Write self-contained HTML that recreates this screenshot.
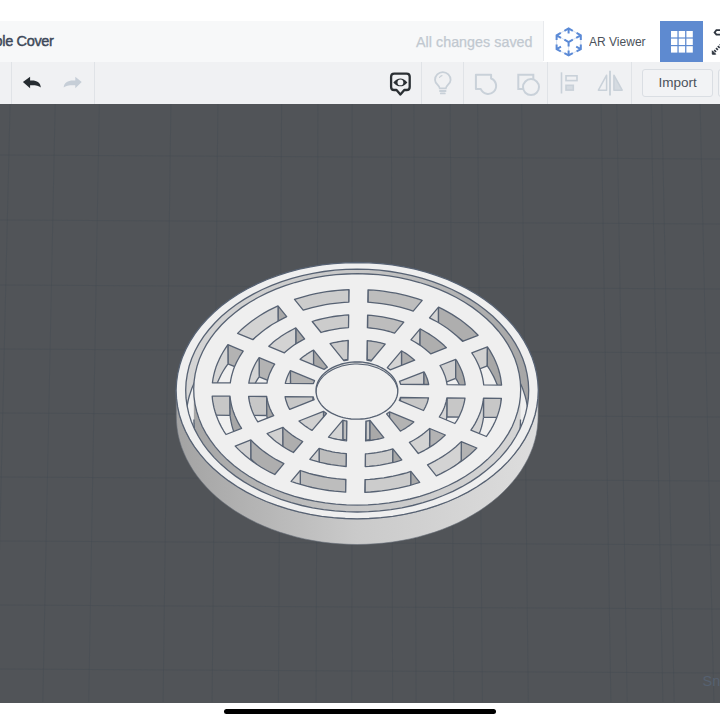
<!DOCTYPE html>
<html><head><meta charset="utf-8"><style>
html,body{margin:0;padding:0;width:720px;height:720px;overflow:hidden;background:#fff;font-family:"Liberation Sans",sans-serif}
div{position:absolute}
#title{left:0;top:21px;width:543px;height:41px;background:#f7f8f9}
#tline{left:0;top:61.5px;width:720px;height:1px;background:#e4e6e9}
#ttl{right:666.5px;top:33px;font-size:14.5px;color:#3d4959;white-space:nowrap;letter-spacing:-0.35px;-webkit-text-stroke:0.45px #3d4959}
#saved{left:416px;top:33.6px;font-size:14.3px;color:#c1c8d0;white-space:nowrap;-webkit-text-stroke:0.25px #c1c8d0;letter-spacing:0.03px}
#ar{left:543px;top:21px;width:177px;height:40px;background:#fff;border-left:1px solid #e8eaed}
#artxt{left:589.3px;top:34.4px;font-size:13.6px;color:#4b525b;white-space:nowrap;transform-origin:0 0;transform:scaleX(0.885)}
#gridbtn{left:660px;top:21px;width:43px;height:41px;background:#5e8ad0}
#tb{left:0;top:62px;width:720px;height:42px;background:#f0f1f3}
.dv{top:62px;width:1px;height:42px;background:#e0e3e7}
#canvas{left:0;top:104px;width:720px;height:598.5px;background:#515458;overflow:hidden}
#bottom{left:0;top:702.5px;width:720px;height:18px;background:#fff}
#home{left:224px;top:708.5px;width:272px;height:5px;border-radius:3px;background:#000}
#import{left:642px;top:69px;width:71px;height:28px;box-sizing:border-box;border:1px solid #dadee3;border-radius:3px;background:#f2f3f5}
#import2{left:718px;top:69px;width:10px;height:28px;box-sizing:border-box;border:1px solid #dadee3;border-radius:3px;background:#f2f3f5}
#imptxt{left:658.5px;top:75px;font-size:13.5px;color:#4b525b;white-space:nowrap}
#snap{left:702.5px;top:673px;font-size:14.5px;color:#566170;white-space:nowrap}
svg{position:absolute}
</style></head><body>
<div id="title"></div>
<div id="ttl">ole Cover</div>
<div id="saved">All changes saved</div>
<div id="ar"></div>
<div id="tline"></div>
<svg style="left:548px;top:22px" width="40" height="40" viewBox="548 22 40 40">
 <g fill="none" stroke="#cbd8ec" stroke-width="0.8">
  <path d="M568.6 28.4 L580.8 35.3 L580.8 49.2 L568.6 55.3 L556.6 49.2 L556.6 35.3 Z M556.6 35.3 L568.6 42 L580.8 35.3 M568.6 42 V55.3"/>
 </g>
 <g fill="none" stroke="#5b8ad6" stroke-width="2" stroke-linecap="butt" stroke-linejoin="miter">
  <path d="M564.4 30.8 L568.6 28.4 L572.8 30.8 M568.6 28.4 V33.6"/>
  <path d="M576.6 32.9 L580.8 35.3 L580.8 40 M580.8 35.3 L576.2 37.8"/>
  <path d="M580.8 44.5 L580.8 49.2 L576.6 51.3 M580.8 49.2 L576.2 46.7"/>
  <path d="M572.8 53.2 L568.6 55.3 L564.4 53.2 M568.6 55.3 V50.5"/>
  <path d="M560.8 51.3 L556.6 49.2 L556.6 44.5 M556.6 49.2 L561 46.7"/>
  <path d="M556.6 40 L556.6 35.3 L560.8 32.9 M556.6 35.3 L561 37.8"/>
  <path d="M564.4 39.6 L568.6 42 L572.8 39.6 M568.6 42 V46.5"/>
 </g>
</svg>
<div id="artxt">AR Viewer</div>
<div id="gridbtn"></div>
<svg style="left:670.5px;top:31px" width="22" height="22" viewBox="0 0 22 22">
 <g fill="#fff">
  <rect x="0" y="0" width="6.4" height="6.4"/><rect x="7.7" y="0" width="6.4" height="6.4"/><rect x="15.4" y="0" width="6.4" height="6.4"/>
  <rect x="0" y="7.6" width="6.4" height="6.4"/><rect x="7.7" y="7.6" width="6.4" height="6.4"/><rect x="15.4" y="7.6" width="6.4" height="6.4"/>
  <rect x="0" y="15.2" width="6.4" height="6.4"/><rect x="7.7" y="15.2" width="6.4" height="6.4"/><rect x="15.4" y="15.2" width="6.4" height="6.4"/>
 </g>
</svg>
<svg style="left:705px;top:25px" width="15" height="32" viewBox="705 25 15 32">
 <path d="M720.5 30.2 H716.4 L714.6 32.4 L716.4 34.6 H720.5" fill="none" stroke="#2f3640" stroke-width="1.8"/>
 <path d="M714.6 51.6 L720.5 45" fill="none" stroke="#2f3640" stroke-width="2.6" stroke-dasharray="1.6 1.1"/>
 <path d="M712.3 50.8 L712.3 54.2 L715.7 54.2 Z" fill="#2f3640" stroke="#2f3640" stroke-width="1"/>
</svg>
<div id="tb"></div>
<div class="dv" style="left:11px"></div>
<div class="dv" style="left:94px"></div>
<div class="dv" style="left:421px"></div>
<div class="dv" style="left:463px"></div>
<div class="dv" style="left:547px"></div>
<div class="dv" style="left:631px"></div>
<svg style="left:0;top:62px" width="720" height="42" viewBox="0 62 720 42">
 <!-- undo -->
 <path d="M22.9 82.1 L30.1 76.8 L30.1 80.4 L32 80.4 C37 80.4 40.8 82.5 40.8 87.6 C39 85.8 36 85.3 32 85.3 L30.1 85.3 L30.1 88.2 Z" fill="#262c31"/>
 <!-- redo -->
 <path d="M81.7 82.1 L75.3 76.8 L75.3 80.4 L73 80.4 C68 80.4 63.7 82.5 63.7 87.6 C65.5 85.8 69 85.3 73 85.3 L75.3 85.3 L75.3 88.2 Z" fill="#c6ced7"/>
 <!-- eye note -->
 <path d="M394.2 73.6 H406.6 Q409.7 73.6 409.7 76.7 V86.9 Q409.7 90 406.6 90 H404.3 L400.4 94.6 L396.5 90 H394.2 Q391.1 90 391.1 86.9 V76.7 Q391.1 73.6 394.2 73.6 Z" fill="none" stroke="#2a2f33" stroke-width="2.3" stroke-linejoin="round"/>
 <path d="M393.3 82.4 Q400.4 74.5 407.4 82.4 Q400.4 90.3 393.3 82.4 Z" fill="#2a2f33"/>
 <circle cx="400.4" cy="82.4" r="2.9" fill="#f2f3f5"/>
 <!-- bulb -->
 <g fill="none" stroke="#c8d0d8" stroke-width="1.8" stroke-linecap="round">
  <path d="M439.8 88.4 C439.8 85.5 435 84 435 80 A7.8 7.8 0 0 1 450.6 80 C450.6 84 445.8 85.5 445.8 88.4 Z"/>
  <path d="M440 91 H445.6 M440.8 93.4 H444.8"/>
  <path d="M439.5 77.5 A4 4 0 0 1 442 75.6" stroke-width="1.1"/>
 </g>
 <!-- union 1 -->
 <path d="M475.9 74.8 H491.1 V78.5 A8 8 0 1 1 480.7 88.9 H475.9 Z" fill="none" stroke="#c9d1d9" stroke-width="2" stroke-linejoin="round"/>
 <!-- union 2 -->
 <g fill="none" stroke="#c9d1d9" stroke-width="2">
  <path d="M523.5 88.9 H518.3 V74.8 H533.3 V79.5"/>
  <circle cx="531" cy="87.1" r="8"/>
 </g>
 <!-- align -->
 <g stroke="#c9d1d9" stroke-width="1.6">
  <path d="M561.5 72.3 V93.5"/>
  <rect x="566" y="75.8" width="11" height="4.8" fill="none"/>
  <rect x="566" y="85.3" width="7.3" height="4.8" fill="#d5dbe1"/>
 </g>
 <!-- mirror -->
 <g stroke="#c9d1d9" stroke-width="1.5" stroke-linejoin="round">
  <path d="M598.4 90.2 L606.6 75.2 V90.2 Z" fill="none"/>
  <path d="M610 70.8 V95.4" stroke-width="1.9"/>
  <path d="M613.9 75.2 L622.2 90.2 H613.9 Z" fill="#d5dbe1"/>
 </g>
</svg>
<div id="import"></div>
<div id="import2"></div>
<div id="imptxt">Import</div>
<div id="canvas"></div>
<svg style="left:0;top:0" width="720" height="720" viewBox="0 0 720 720"><path d="M10.1 104L-4.1 702M55.2 104L42.8 702M99.3 104L88.7 702M170.9 104L163.1 702M217.9 104L212.1 702M281.6 104L278.4 702M317.9 104L316.1 702M352.2 104L351.8 702M391.4 104L392.6 702M413.9 104L416.1 702M450.2 104L453.8 702M477.6 104L482.4 702M521.7 104L528.3 702M601.1 104L610.9 702M616.8 104L627.2 702M651.1 104L662.9 702M661.8 104L674.2 702M700.1 104L713.9 702M0 155L720 159M0 220L720 224M0 285L720 289M0 349L720 353M0 413L720 417M0 477L720 481M0 541L720 545M0 605L720 609M0 669L720 673" stroke="#434a53" stroke-opacity="0.4" stroke-width="1" fill="none"/></svg>
<svg width="720" height="720" viewBox="0 0 720 720" style="position:absolute;left:0;top:0"><defs><linearGradient id="sideg" x1="0" x2="1" y1="0" y2="0"><stop offset="0" stop-color="#a3a3a3"/><stop offset="0.5" stop-color="#cacaca"/><stop offset="1" stop-color="#dddddd"/></linearGradient><clipPath id="clip"><path d="M528.7 390.0 528.3 382.1 527.1 374.2 525.3 366.3 522.7 358.6 519.4 351.0 515.4 343.6 510.7 336.4 505.4 329.5 499.4 322.7 492.9 316.3 485.7 310.2 478.1 304.5 469.9 299.1 461.2 294.1 452.1 289.5 442.6 285.3 432.7 281.6 422.5 278.3 412.1 275.6 401.4 273.3 390.5 271.5 379.5 270.2 368.4 269.4 357.2 269.2 346.0 269.4 334.9 270.2 323.9 271.5 313.0 273.3 302.3 275.6 291.9 278.3 281.7 281.6 271.8 285.3 262.3 289.5 253.2 294.1 244.5 299.1 236.3 304.5 228.7 310.2 221.5 316.3 215.0 322.7 209.0 329.5 203.7 336.4 199.0 343.6 195.0 351.0 191.7 358.6 189.1 366.3 187.3 374.2 186.1 382.1 185.7 390.0 186.0 397.9 187.1 405.9 188.8 413.7 191.3 421.5 194.6 429.1 198.5 436.5 203.1 443.8 208.3 450.8 214.2 457.6 220.7 464.1 227.9 470.3 235.5 476.1 243.7 481.6 252.4 486.7 261.5 491.3 271.1 495.5 281.0 499.3 291.3 502.6 301.8 505.5 312.6 507.8 323.6 509.6 334.7 510.9 345.9 511.7 357.2 512.0 368.5 511.7 379.7 510.9 390.8 509.6 401.8 507.8 412.6 505.5 423.1 502.6 433.4 499.3 443.3 495.5 452.9 491.3 462.0 486.7 470.7 481.6 478.9 476.1 486.5 470.3 493.7 464.1 500.2 457.6 506.1 450.8 511.3 443.8 515.9 436.5 519.8 429.1 523.1 421.5 525.6 413.7 527.3 405.9 528.4 397.9Z"/></clipPath><linearGradient id="lipg" gradientUnits="userSpaceOnUse" x1="185.7" x2="528.7" y1="0" y2="0"><stop offset="0" stop-color="#d5d5d5"/><stop offset="0.5" stop-color="#c7c7c7"/><stop offset="1" stop-color="#a6a6a6"/></linearGradient><linearGradient id="grg" gradientUnits="userSpaceOnUse" x1="193.7" x2="520.7" y1="0" y2="0"><stop offset="0" stop-color="#a6a6a6"/><stop offset="0.5" stop-color="#c7c7c7"/><stop offset="1" stop-color="#d5d5d5"/></linearGradient><clipPath id="h1"><path d="M400.6 384.3 428.7 384.5 428.4 383.2 428.1 381.9 427.8 380.6 427.4 379.3 426.9 378.0 426.4 376.8 425.9 375.5 425.3 374.2 424.7 373.0 424.0 371.8 399.5 381.4 399.7 381.7 399.8 382.0 399.9 382.2 400.0 382.5 400.1 382.8 400.2 383.1 400.3 383.4 400.4 383.7 400.5 384.0Z"/></clipPath><clipPath id="h2"><path d="M390.2 369.8 414.7 360.2 413.5 359.2 412.3 358.2 411.1 357.2 409.8 356.2 408.5 355.2 407.2 354.3 405.8 353.4 404.4 352.5 403.0 351.7 401.5 350.8 387.3 367.7 387.6 367.9 387.9 368.1 388.2 368.3 388.5 368.5 388.8 368.7 389.1 369.0 389.4 369.2 389.7 369.4 390.0 369.6Z"/></clipPath><clipPath id="h3"><path d="M371.0 361.0 385.2 344.1 383.5 343.6 381.7 343.1 380.0 342.7 378.2 342.3 376.4 341.9 374.6 341.6 372.7 341.3 370.9 341.0 369.0 340.8 367.2 340.6 366.9 360.1 367.3 360.2 367.7 360.3 368.1 360.4 368.5 360.4 368.9 360.5 369.3 360.6 369.7 360.7 370.2 360.8 370.6 360.9Z"/></clipPath><clipPath id="h4"><path d="M347.9 360.0 348.3 340.4 346.4 340.6 344.5 340.8 342.7 341.0 340.8 341.3 339.0 341.6 337.2 342.0 335.4 342.3 333.6 342.7 331.8 343.2 330.1 343.7 343.8 360.7 344.2 360.7 344.6 360.6 345.0 360.5 345.4 360.4 345.9 360.3 346.3 360.3 346.7 360.2 347.1 360.1 347.5 360.1Z"/></clipPath><clipPath id="h5"><path d="M327.3 367.2 313.6 350.1 312.1 350.9 310.6 351.8 309.2 352.6 307.8 353.5 306.4 354.4 305.1 355.4 303.8 356.3 302.5 357.3 301.3 358.3 300.1 359.3 324.2 369.3 324.5 369.1 324.8 368.9 325.1 368.7 325.4 368.5 325.7 368.2 326.0 368.0 326.3 367.8 326.7 367.6 327.0 367.4Z"/></clipPath><clipPath id="h6"><path d="M314.6 380.7 290.4 370.7 289.7 371.9 289.0 373.2 288.4 374.4 287.8 375.7 287.3 376.9 286.8 378.2 286.4 379.5 286.0 380.8 285.6 382.1 285.3 383.4 313.4 383.6 313.5 383.3 313.6 383.0 313.7 382.7 313.8 382.4 313.9 382.1 314.1 381.9 314.2 381.6 314.3 381.3 314.4 381.0Z"/></clipPath><clipPath id="h7"><path d="M313.2 396.9 285.1 396.6 285.3 397.9 285.6 399.2 286.0 400.5 286.4 401.8 286.8 403.1 287.3 404.4 287.8 405.7 288.4 406.9 289.0 408.2 289.7 409.4 314.2 399.7 314.1 399.5 314.0 399.2 313.9 398.9 313.8 398.6 313.6 398.3 313.5 398.0 313.4 397.7 313.3 397.4 313.3 397.1Z"/></clipPath><clipPath id="h8"><path d="M323.5 411.3 299.0 421.0 300.1 422.0 301.3 423.1 302.6 424.1 303.8 425.0 305.1 426.0 306.5 426.9 307.8 427.8 309.2 428.7 310.7 429.6 312.1 430.4 326.5 413.5 326.2 413.3 325.9 413.1 325.6 412.8 325.3 412.6 325.0 412.4 324.7 412.2 324.4 412.0 324.1 411.8 323.8 411.6Z"/></clipPath><clipPath id="h9"><path d="M342.8 420.2 328.5 437.2 330.2 437.7 332.0 438.2 333.7 438.6 335.5 439.0 337.4 439.4 339.2 439.7 341.0 440.0 342.9 440.3 344.7 440.6 346.6 440.8 346.9 421.1 346.5 421.0 346.1 420.9 345.7 420.8 345.3 420.8 344.8 420.7 344.4 420.6 344.0 420.5 343.6 420.4 343.2 420.3Z"/></clipPath><clipPath id="h10"><path d="M365.9 421.2 365.6 440.9 367.5 440.7 369.3 440.5 371.2 440.3 373.0 440.0 374.9 439.7 376.7 439.4 378.5 439.0 380.3 438.6 382.1 438.1 383.8 437.6 370.0 420.5 369.6 420.5 369.2 420.6 368.8 420.7 368.4 420.8 368.0 420.9 367.6 420.9 367.1 421.0 366.7 421.1 366.3 421.1Z"/></clipPath><clipPath id="h11"><path d="M386.6 413.9 400.4 431.1 401.9 430.3 403.3 429.5 404.8 428.6 406.2 427.7 407.5 426.8 408.9 425.9 410.1 424.9 411.4 423.9 412.6 422.9 413.8 421.9 389.6 411.9 389.3 412.1 389.0 412.3 388.7 412.5 388.4 412.7 388.1 412.9 387.8 413.1 387.5 413.3 387.2 413.5 386.9 413.7Z"/></clipPath><clipPath id="h12"><path d="M399.3 400.4 423.5 410.5 424.2 409.2 424.8 408.0 425.5 406.8 426.0 405.5 426.6 404.2 427.1 403.0 427.5 401.7 427.9 400.4 428.2 399.1 428.5 397.8 400.4 397.5 400.3 397.8 400.2 398.1 400.1 398.4 400.0 398.7 399.9 399.0 399.8 399.3 399.7 399.6 399.5 399.9 399.4 400.1Z"/></clipPath><clipPath id="h13"><path d="M447.1 384.6 465.2 384.8 464.8 382.2 464.3 379.5 463.7 376.9 462.9 374.3 462.1 371.7 461.0 369.2 459.9 366.7 458.6 364.2 457.3 361.7 455.7 359.3 440.0 365.5 441.1 367.3 442.1 369.2 443.0 371.0 443.8 372.9 444.6 374.9 445.3 376.8 445.8 378.7 446.3 380.7 446.7 382.7Z"/></clipPath><clipPath id="h14"><path d="M430.7 353.9 446.4 347.7 444.2 345.6 441.9 343.5 439.5 341.4 437.0 339.4 434.4 337.5 431.7 335.7 428.9 333.9 426.1 332.2 423.1 330.5 420.1 328.9 410.9 339.8 413.1 341.0 415.3 342.3 417.5 343.6 419.5 344.9 421.6 346.3 423.5 347.8 425.4 349.2 427.2 350.8 429.0 352.3Z"/></clipPath><clipPath id="h15"><path d="M394.6 333.1 403.8 322.2 400.3 321.1 396.9 320.1 393.3 319.2 389.7 318.3 386.1 317.6 382.5 316.9 378.8 316.3 375.1 315.8 371.3 315.4 367.6 315.1 367.4 327.7 370.2 328.0 373.0 328.3 375.8 328.7 378.5 329.2 381.3 329.7 384.0 330.2 386.7 330.8 389.4 331.5 392.0 332.3Z"/></clipPath><clipPath id="h16"><path d="M348.5 327.6 348.7 315.0 344.9 315.2 341.2 315.6 337.4 316.0 333.7 316.5 330.1 317.1 326.4 317.8 322.8 318.6 319.2 319.5 315.7 320.4 312.2 321.5 321.1 332.5 323.7 331.7 326.4 331.0 329.1 330.4 331.8 329.8 334.5 329.3 337.3 328.8 340.0 328.4 342.8 328.1 345.6 327.8Z"/></clipPath><clipPath id="h17"><path d="M304.6 339.0 295.8 327.9 292.7 329.5 289.7 331.1 286.7 332.8 283.9 334.5 281.1 336.3 278.5 338.2 275.9 340.1 273.4 342.1 271.1 344.2 268.8 346.3 284.4 352.8 286.1 351.2 287.9 349.7 289.8 348.2 291.7 346.7 293.7 345.3 295.8 343.9 297.9 342.6 300.1 341.4 302.3 340.1Z"/></clipPath><clipPath id="h18"><path d="M274.7 364.2 259.1 357.7 257.5 360.1 256.0 362.5 254.7 365.0 253.5 367.5 252.4 370.1 251.4 372.6 250.6 375.2 249.9 377.8 249.3 380.4 248.8 383.1 267.0 383.2 267.3 381.2 267.8 379.3 268.4 377.3 269.0 375.4 269.7 373.5 270.6 371.6 271.5 369.7 272.4 367.8 273.5 366.0Z"/></clipPath><clipPath id="h19"><path d="M266.7 396.5 248.6 396.3 248.9 399.0 249.4 401.6 250.0 404.2 250.7 406.8 251.6 409.4 252.6 412.0 253.7 414.5 254.9 417.0 256.3 419.5 257.8 421.9 273.7 415.7 272.6 413.9 271.6 412.0 270.7 410.1 269.8 408.2 269.1 406.3 268.4 404.3 267.9 402.4 267.4 400.4 267.0 398.5Z"/></clipPath><clipPath id="h20"><path d="M282.9 427.3 267.1 433.5 269.3 435.7 271.6 437.8 274.0 439.9 276.5 441.9 279.1 443.8 281.8 445.7 284.5 447.5 287.4 449.2 290.4 450.9 293.4 452.5 302.7 441.5 300.5 440.3 298.3 439.0 296.1 437.7 294.0 436.4 292.0 435.0 290.1 433.5 288.2 432.0 286.4 430.5 284.6 428.9Z"/></clipPath><clipPath id="h21"><path d="M319.1 448.3 309.8 459.3 313.2 460.4 316.7 461.4 320.3 462.4 323.9 463.2 327.5 464.0 331.2 464.7 334.9 465.2 338.6 465.7 342.4 466.1 346.2 466.5 346.4 453.7 343.5 453.4 340.7 453.1 337.9 452.7 335.2 452.3 332.4 451.8 329.7 451.2 327.0 450.6 324.3 449.9 321.7 449.1Z"/></clipPath><clipPath id="h22"><path d="M365.4 453.8 365.2 466.6 369.0 466.4 372.7 466.0 376.5 465.6 380.2 465.1 383.9 464.4 387.6 463.7 391.2 462.9 394.8 462.1 398.3 461.1 401.8 460.0 392.9 448.9 390.2 449.7 387.6 450.4 384.9 451.0 382.1 451.6 379.4 452.1 376.6 452.6 373.8 453.0 371.0 453.3 368.2 453.6Z"/></clipPath><clipPath id="h23"><path d="M409.4 442.4 418.3 453.5 421.4 451.9 424.5 450.3 427.4 448.6 430.2 446.9 433.0 445.1 435.7 443.2 438.2 441.2 440.7 439.2 443.1 437.1 445.3 435.0 429.7 428.5 427.9 430.1 426.1 431.6 424.3 433.1 422.3 434.6 420.3 436.0 418.3 437.4 416.1 438.7 413.9 440.0 411.7 441.2Z"/></clipPath><clipPath id="h24"><path d="M439.3 417.0 454.9 423.5 456.5 421.1 458.0 418.6 459.3 416.2 460.5 413.6 461.6 411.1 462.5 408.5 463.3 405.9 464.0 403.3 464.6 400.7 465.0 398.1 446.9 397.9 446.5 399.9 446.1 401.9 445.5 403.8 444.9 405.8 444.2 407.7 443.4 409.6 442.5 411.5 441.5 413.4 440.4 415.2Z"/></clipPath><clipPath id="h25"><path d="M483.7 384.9 501.6 385.1 501.1 381.1 500.5 377.2 499.6 373.2 498.5 369.3 497.2 365.4 495.6 361.6 493.9 357.8 491.9 354.1 489.8 350.4 487.4 346.8 471.8 352.9 473.8 356.0 475.6 359.0 477.2 362.2 478.6 365.3 479.9 368.5 481.0 371.8 481.9 375.0 482.7 378.3 483.3 381.6Z"/></clipPath><clipPath id="h26"><path d="M462.5 341.4 478.1 335.3 474.8 332.0 471.5 328.8 467.9 325.7 464.2 322.7 460.3 319.8 456.2 317.1 452.0 314.4 447.6 311.9 443.1 309.4 438.5 307.1 429.5 317.8 433.3 319.8 437.0 321.8 440.7 324.0 444.2 326.2 447.6 328.5 450.8 330.9 453.9 333.4 456.9 336.0 459.8 338.7Z"/></clipPath><clipPath id="h27"><path d="M413.2 311.1 422.2 300.4 417.1 298.7 411.9 297.1 406.6 295.7 401.3 294.4 395.9 293.2 390.4 292.3 384.8 291.4 379.2 290.7 373.6 290.2 368.0 289.8 367.8 302.2 372.5 302.6 377.2 303.1 381.8 303.6 386.5 304.4 391.1 305.2 395.6 306.1 400.1 307.2 404.5 308.4 408.9 309.7Z"/></clipPath><clipPath id="h28"><path d="M348.9 302.1 349.1 289.7 343.4 290.0 337.8 290.4 332.2 291.0 326.6 291.7 321.1 292.7 315.7 293.7 310.2 294.9 304.9 296.3 299.7 297.8 294.5 299.4 303.2 310.2 307.6 308.9 312.0 307.7 316.4 306.6 320.9 305.6 325.5 304.7 330.1 303.9 334.8 303.3 339.5 302.8 344.2 302.4Z"/></clipPath><clipPath id="h29"><path d="M286.7 316.7 278.0 305.9 273.3 308.1 268.7 310.4 264.3 312.9 260.0 315.5 255.9 318.2 251.9 321.0 248.1 324.0 244.4 327.0 240.9 330.1 237.6 333.4 252.9 339.7 255.7 337.1 258.7 334.4 261.7 331.9 264.9 329.5 268.3 327.1 271.7 324.8 275.3 322.7 279.0 320.6 282.8 318.6Z"/></clipPath><clipPath id="h30"><path d="M243.2 351.1 227.9 344.7 225.4 348.3 223.1 352.0 221.0 355.7 219.2 359.4 217.5 363.2 216.0 367.1 214.8 371.0 213.8 374.9 213.0 378.8 212.4 382.8 230.3 382.9 230.8 379.6 231.5 376.3 232.4 373.1 233.4 369.8 234.6 366.6 236.0 363.4 237.6 360.3 239.3 357.2 241.2 354.1Z"/></clipPath><clipPath id="h31"><path d="M230.0 396.2 212.2 396.1 212.5 400.0 213.2 404.0 214.0 407.9 215.1 411.8 216.4 415.7 217.9 419.6 219.6 423.4 221.5 427.1 223.6 430.8 226.0 434.5 241.6 428.3 239.7 425.3 237.9 422.2 236.4 419.0 234.9 415.8 233.7 412.6 232.6 409.4 231.7 406.1 231.0 402.8 230.4 399.5Z"/></clipPath><clipPath id="h32"><path d="M250.9 439.9 235.2 446.1 238.4 449.4 241.8 452.6 245.4 455.7 249.1 458.8 253.0 461.7 257.0 464.5 261.2 467.2 265.6 469.8 270.1 472.2 274.8 474.5 283.9 463.7 280.1 461.7 276.3 459.7 272.7 457.5 269.2 455.2 265.8 452.9 262.5 450.5 259.4 447.9 256.4 445.3 253.6 442.7Z"/></clipPath><clipPath id="h33"><path d="M300.3 470.5 291.1 481.4 296.2 483.1 301.5 484.7 306.8 486.2 312.2 487.5 317.7 488.6 323.2 489.6 328.8 490.5 334.4 491.2 340.1 491.7 345.7 492.1 345.9 479.5 341.2 479.1 336.5 478.7 331.8 478.1 327.1 477.4 322.5 476.5 317.9 475.5 313.4 474.5 309.0 473.3 304.6 471.9Z"/></clipPath><clipPath id="h34"><path d="M365.0 479.6 364.8 492.3 370.5 492.0 376.1 491.5 381.8 490.9 387.4 490.1 393.0 489.2 398.5 488.2 403.9 486.9 409.3 485.6 414.6 484.0 419.7 482.4 410.9 471.4 406.6 472.8 402.1 474.0 397.6 475.1 393.1 476.1 388.5 477.0 383.9 477.8 379.2 478.4 374.5 479.0 369.7 479.4Z"/></clipPath><clipPath id="h35"><path d="M427.5 464.8 436.3 475.8 441.0 473.6 445.6 471.2 450.0 468.7 454.3 466.1 458.5 463.3 462.5 460.5 466.3 457.5 470.0 454.4 473.5 451.3 476.8 448.0 461.3 441.6 458.5 444.3 455.6 446.9 452.5 449.5 449.3 451.9 446.0 454.3 442.5 456.6 438.9 458.8 435.2 460.9 431.4 462.9Z"/></clipPath><clipPath id="h36"><path d="M470.9 430.1 486.4 436.5 488.8 432.9 491.1 429.3 493.1 425.6 495.0 421.8 496.6 418.0 498.0 414.1 499.2 410.2 500.2 406.3 500.9 402.3 501.4 398.4 483.5 398.2 483.1 401.5 482.4 404.8 481.6 408.1 480.6 411.4 479.4 414.6 478.0 417.8 476.5 420.9 474.8 424.1 472.9 427.1Z"/></clipPath><clipPath id="cdisc"><path d="M397.8 390.9 397.8 389.0 397.5 387.1 397.1 385.3 396.5 383.5 395.8 381.7 394.9 379.9 393.8 378.2 392.5 376.5 391.2 374.9 389.6 373.4 387.9 371.9 386.1 370.6 384.2 369.3 382.2 368.1 380.0 367.0 377.7 365.9 375.4 365.0 373.0 364.3 370.5 363.6 367.9 363.0 365.3 362.6 362.7 362.2 360.0 362.0 357.4 362.0 354.7 362.0 352.0 362.2 349.4 362.4 346.8 362.8 344.2 363.4 341.7 364.0 339.2 364.8 336.9 365.6 334.6 366.6 332.4 367.7 330.3 368.8 328.3 370.1 326.5 371.4 324.7 372.9 323.2 374.4 321.7 376.0 320.4 377.6 319.3 379.3 318.3 381.1 317.5 382.8 316.9 384.7 316.4 386.5 316.1 388.4 316.0 390.2 316.0 392.1 316.3 394.0 316.7 395.8 317.2 397.7 318.0 399.5 318.9 401.2 320.0 402.9 321.2 404.6 322.6 406.2 324.1 407.8 325.8 409.2 327.6 410.6 329.5 411.9 331.6 413.1 333.8 414.2 336.0 415.2 338.4 416.1 340.8 416.9 343.3 417.6 345.8 418.2 348.5 418.6 351.1 419.0 353.8 419.2 356.4 419.2 359.1 419.2 361.8 419.0 364.4 418.8 367.1 418.3 369.6 417.8 372.1 417.2 374.6 416.4 377.0 415.6 379.3 414.6 381.5 413.5 383.6 412.3 385.5 411.1 387.4 409.7 389.1 408.3 390.7 406.8 392.1 405.2 393.4 403.5 394.5 401.8 395.5 400.1 396.3 398.3 397.0 396.5 397.4 394.6 397.7 392.8Z"/></clipPath></defs><path d="M176.3 415.7 176.5 422.0 177.1 428.3 178.1 434.5 179.6 440.7 181.5 446.9 183.9 452.9 186.6 458.9 189.8 464.8 193.3 470.6 197.3 476.2 201.7 481.7 206.4 487.1 211.5 492.3 216.9 497.2 222.7 502.0 228.8 506.6 235.3 511.0 242.0 515.1 249.0 519.0 256.3 522.7 263.8 526.1 271.6 529.2 279.5 532.1 287.7 534.6 296.0 536.9 304.4 538.9 313.0 540.6 321.7 542.0 330.5 543.1 339.4 543.8 348.3 544.3 357.2 544.5 366.1 544.3 375.0 543.8 383.9 543.1 392.7 542.0 401.4 540.6 410.0 538.9 418.4 536.9 426.7 534.6 434.9 532.1 442.8 529.2 450.6 526.1 458.1 522.7 465.4 519.0 472.4 515.1 479.1 511.0 485.6 506.6 491.7 502.0 497.5 497.2 502.9 492.3 508.0 487.1 512.7 481.7 517.1 476.2 521.1 470.6 524.6 464.8 527.8 458.9 530.5 452.9 532.9 446.9 534.8 440.7 536.3 434.5 537.3 428.3 537.9 422.0 538.1 415.7 538.3 390.0 538.1 396.3 537.5 402.6 536.4 408.8 535.0 415.0 533.0 421.2 530.7 427.3 528.0 433.2 524.8 439.1 521.2 444.9 517.3 450.5 512.9 456.0 508.2 461.4 503.1 466.6 497.6 471.6 491.8 476.3 485.7 480.9 479.2 485.3 472.5 489.4 465.5 493.3 458.2 497.0 450.7 500.4 442.9 503.5 435.0 506.4 426.8 508.9 418.5 511.2 410.0 513.2 401.4 514.9 392.7 516.3 383.9 517.4 375.0 518.2 366.1 518.6 357.2 518.8 348.3 518.6 339.4 518.2 330.5 517.4 321.7 516.3 313.0 514.9 304.4 513.2 295.9 511.2 287.6 508.9 279.4 506.4 271.5 503.5 263.7 500.4 256.2 497.0 248.9 493.3 241.9 489.4 235.2 485.3 228.7 480.9 222.6 476.3 216.8 471.6 211.3 466.6 206.2 461.4 201.5 456.0 197.1 450.5 193.2 444.9 189.6 439.1 186.4 433.2 183.7 427.3 181.4 421.2 179.4 415.0 178.0 408.8 176.9 402.6 176.3 396.3 176.1 390.0Z" fill="url(#sideg)" stroke="#6a707a" stroke-width="0.6"/><path d="M538.3 390.0 537.8 381.6 536.6 373.3 534.6 365.0 531.9 356.9 528.4 348.9 524.2 341.1 519.2 333.4 513.6 326.1 507.3 319.0 500.4 312.2 492.9 305.8 484.8 299.7 476.1 294.0 467.0 288.7 457.4 283.9 447.3 279.5 436.9 275.6 426.2 272.2 415.1 269.2 403.8 266.8 392.4 264.9 380.7 263.6 369.0 262.8 357.2 262.5 345.4 262.8 333.7 263.6 322.0 264.9 310.6 266.8 299.3 269.2 288.2 272.2 277.5 275.6 267.1 279.5 257.0 283.9 247.4 288.7 238.3 294.0 229.6 299.7 221.5 305.8 214.0 312.2 207.1 319.0 200.8 326.1 195.2 333.4 190.2 341.1 186.0 348.9 182.5 356.9 179.8 365.0 177.8 373.3 176.6 381.6 176.1 390.0 176.5 398.4 177.6 406.7 179.4 415.0 182.1 423.2 185.5 431.3 189.6 439.1 194.5 446.8 200.0 454.2 206.2 461.4 213.1 468.2 220.6 474.8 228.7 480.9 237.4 486.7 246.5 492.1 256.2 497.0 266.3 501.5 276.8 505.4 287.6 508.9 298.7 511.9 310.1 514.4 321.7 516.3 333.4 517.7 345.3 518.5 357.2 518.8 369.1 518.5 381.0 517.7 392.7 516.3 404.3 514.4 415.7 511.9 426.8 508.9 437.6 505.4 448.1 501.5 458.2 497.0 467.9 492.1 477.0 486.7 485.7 480.9 493.8 474.8 501.3 468.2 508.2 461.4 514.4 454.2 519.9 446.8 524.8 439.1 528.9 431.3 532.3 423.2 535.0 415.0 536.8 406.7 537.9 398.4Z" fill="#efefef" stroke="#576273" stroke-width="1.3"/><g clip-path="url(#clip)"><path d="M528.7 390.0 528.3 382.1 527.1 374.2 525.3 366.3 522.7 358.6 519.4 351.0 515.4 343.6 510.7 336.4 505.4 329.5 499.4 322.7 492.9 316.3 485.7 310.2 478.1 304.5 469.9 299.1 461.2 294.1 452.1 289.5 442.6 285.3 432.7 281.6 422.5 278.3 412.1 275.6 401.4 273.3 390.5 271.5 379.5 270.2 368.4 269.4 357.2 269.2 346.0 269.4 334.9 270.2 323.9 271.5 313.0 273.3 302.3 275.6 291.9 278.3 281.7 281.6 271.8 285.3 262.3 289.5 253.2 294.1 244.5 299.1 236.3 304.5 228.7 310.2 221.5 316.3 215.0 322.7 209.0 329.5 203.7 336.4 199.0 343.6 195.0 351.0 191.7 358.6 189.1 366.3 187.3 374.2 186.1 382.1 185.7 390.0 186.0 397.9 187.1 405.9 188.8 413.7 191.3 421.5 194.6 429.1 198.5 436.5 203.1 443.8 208.3 450.8 214.2 457.6 220.7 464.1 227.9 470.3 235.5 476.1 243.7 481.6 252.4 486.7 261.5 491.3 271.1 495.5 281.0 499.3 291.3 502.6 301.8 505.5 312.6 507.8 323.6 509.6 334.7 510.9 345.9 511.7 357.2 512.0 368.5 511.7 379.7 510.9 390.8 509.6 401.8 507.8 412.6 505.5 423.1 502.6 433.4 499.3 443.3 495.5 452.9 491.3 462.0 486.7 470.7 481.6 478.9 476.1 486.5 470.3 493.7 464.1 500.2 457.6 506.1 450.8 511.3 443.8 515.9 436.5 519.8 429.1 523.1 421.5 525.6 413.7 527.3 405.9 528.4 397.9Z" fill="#f0f0f0"/><path d="M528.7 390.0 528.6 386.0 528.3 382.1 527.8 378.1 527.1 374.2 526.3 370.2 525.3 366.3 524.0 362.5 522.7 358.6 521.1 354.8 519.4 351.0 517.4 347.3 515.4 343.6 513.1 340.0 510.7 336.4 508.1 332.9 505.4 329.5 502.5 326.1 499.4 322.7 496.2 319.5 492.9 316.3 489.4 313.2 485.7 310.2 482.0 307.3 478.1 304.5 474.0 301.7 469.9 299.1 465.6 296.5 461.2 294.1 456.7 291.7 452.1 289.5 447.4 287.3 442.6 285.3 437.7 283.4 432.7 281.6 427.7 279.9 422.5 278.3 417.3 276.9 412.1 275.6 406.8 274.4 401.4 273.3 396.0 272.3 390.5 271.5 385.0 270.8 379.5 270.2 373.9 269.8 368.4 269.4 362.8 269.3 357.2 269.2 351.6 269.3 346.0 269.4 340.5 269.8 334.9 270.2 329.4 270.8 323.9 271.5 318.4 272.3 313.0 273.3 307.6 274.4 302.3 275.6 297.1 276.9 291.9 278.3 286.7 279.9 281.7 281.6 276.7 283.4 271.8 285.3 267.0 287.3 262.3 289.5 257.7 291.7 253.2 294.1 248.8 296.5 244.5 299.1 240.4 301.7 236.3 304.5 232.4 307.3 228.7 310.2 225.0 313.2 221.5 316.3 218.2 319.5 215.0 322.7 211.9 326.1 209.0 329.5 206.3 332.9 203.7 336.4 201.3 340.0 199.0 343.6 197.0 347.3 195.0 351.0 193.3 354.8 191.7 358.6 190.4 362.5 189.1 366.3 188.1 370.2 187.3 374.2 186.6 378.1 186.1 382.1 185.8 386.0 185.7 390.0 185.9 419.6 186.0 415.7 186.3 411.7 186.8 407.7 187.5 403.8 188.3 399.9 189.3 396.0 190.6 392.1 191.9 388.3 193.5 384.5 195.2 380.7 197.1 377.0 199.2 373.3 201.5 369.6 203.9 366.1 206.5 362.5 209.2 359.1 212.1 355.7 215.1 352.4 218.3 349.1 221.7 346.0 225.2 342.9 228.8 339.9 232.6 336.9 236.5 334.1 240.5 331.4 244.7 328.7 248.9 326.2 253.3 323.7 257.8 321.4 262.4 319.1 267.1 317.0 271.9 314.9 276.8 313.0 281.8 311.2 286.8 309.6 291.9 308.0 297.1 306.5 302.4 305.2 307.7 304.0 313.1 302.9 318.5 302.0 323.9 301.1 329.4 300.4 334.9 299.9 340.5 299.4 346.0 299.1 351.6 298.9 357.2 298.8 362.8 298.9 368.4 299.1 373.9 299.4 379.5 299.9 385.0 300.4 390.5 301.1 395.9 302.0 401.3 302.9 406.7 304.0 412.0 305.2 417.3 306.5 422.5 308.0 427.6 309.6 432.6 311.2 437.6 313.0 442.5 314.9 447.3 317.0 452.0 319.1 456.6 321.4 461.1 323.7 465.5 326.2 469.7 328.7 473.9 331.4 477.9 334.1 481.8 336.9 485.6 339.9 489.2 342.9 492.7 346.0 496.1 349.1 499.3 352.4 502.3 355.7 505.2 359.1 507.9 362.5 510.5 366.1 512.9 369.6 515.2 373.3 517.3 377.0 519.2 380.7 520.9 384.5 522.5 388.3 523.8 392.1 525.1 396.0 526.1 399.9 526.9 403.8 527.6 407.7 528.1 411.7 528.4 415.7 528.5 419.6Z" fill="url(#lipg)"/><path d="M528.5 419.6 528.4 415.7 528.1 411.7 527.6 407.7 526.9 403.8 526.1 399.9 525.1 396.0 523.8 392.1 522.5 388.3 520.9 384.5 519.2 380.7 517.3 377.0 515.2 373.3 512.9 369.6 510.5 366.1 507.9 362.5 505.2 359.1 502.3 355.7 499.3 352.4 496.1 349.1 492.7 346.0 489.2 342.9 485.6 339.9 481.8 336.9 477.9 334.1 473.9 331.4 469.7 328.7 465.5 326.2 461.1 323.7 456.6 321.4 452.0 319.1 447.3 317.0 442.5 314.9 437.6 313.0 432.6 311.2 427.6 309.6 422.5 308.0 417.3 306.5 412.0 305.2 406.7 304.0 401.3 302.9 395.9 302.0 390.5 301.1 385.0 300.4 379.5 299.9 373.9 299.4 368.4 299.1 362.8 298.9 357.2 298.8 351.6 298.9 346.0 299.1 340.5 299.4 334.9 299.9 329.4 300.4 323.9 301.1 318.5 302.0 313.1 302.9 307.7 304.0 302.4 305.2 297.1 306.5 291.9 308.0 286.8 309.6 281.8 311.2 276.8 313.0 271.9 314.9 267.1 317.0 262.4 319.1 257.8 321.4 253.3 323.7 248.9 326.2 244.7 328.7 240.5 331.4 236.5 334.1 232.6 336.9 228.8 339.9 225.2 342.9 221.7 346.0 218.3 349.1 215.1 352.4 212.1 355.7 209.2 359.1 206.5 362.5 203.9 366.1 201.5 369.6 199.2 373.3 197.1 377.0 195.2 380.7 193.5 384.5 191.9 388.3 190.6 392.1 189.3 396.0 188.3 399.9 187.5 403.8 186.8 407.7 186.3 411.7 186.0 415.7 185.9 419.6" fill="none" stroke="#576273" stroke-width="1.3"/><path d="M193.7 388.9 193.8 392.7 194.0 396.5 194.4 400.3 195.0 404.1 195.8 407.8 196.7 411.5 197.8 415.2 199.1 418.9 200.5 422.6 202.1 426.2 203.9 429.8 205.9 433.3 208.0 436.8 210.3 440.2 212.7 443.6 215.3 446.9 218.0 450.2 220.9 453.4 223.9 456.5 227.1 459.6 230.4 462.6 233.9 465.5 237.5 468.3 241.2 471.0 245.1 473.7 249.0 476.2 253.1 478.7 257.3 481.1 261.6 483.3 266.0 485.5 270.5 487.6 275.1 489.5 279.8 491.4 284.6 493.1 289.4 494.8 294.4 496.3 299.4 497.7 304.4 499.0 309.5 500.2 314.7 501.2 319.9 502.1 325.2 502.9 330.4 503.6 335.8 504.2 341.1 504.6 346.5 504.9 351.8 505.1 357.2 505.2 362.6 505.1 367.9 504.9 373.3 504.6 378.6 504.2 384.0 503.6 389.2 502.9 394.5 502.1 399.7 501.2 404.9 500.2 410.0 499.0 415.0 497.7 420.0 496.3 425.0 494.8 429.8 493.1 434.6 491.4 439.3 489.5 443.9 487.6 448.4 485.5 452.8 483.3 457.1 481.1 461.3 478.7 465.4 476.2 469.3 473.7 473.2 471.0 476.9 468.3 480.5 465.5 484.0 462.6 487.3 459.6 490.5 456.5 493.5 453.4 496.4 450.2 499.1 446.9 501.7 443.6 504.1 440.2 506.4 436.8 508.5 433.3 510.5 429.8 512.3 426.2 513.9 422.6 515.3 418.9 516.6 415.2 517.7 411.5 518.6 407.8 519.4 404.1 520.0 400.3 520.4 396.5 520.6 392.7 520.7 388.9 520.5 419.6 520.4 423.4 520.2 427.2 519.8 431.0 519.2 434.8 518.4 438.5 517.5 442.2 516.4 445.9 515.1 449.6 513.7 453.3 512.1 456.9 510.3 460.5 508.3 464.0 506.2 467.5 504.0 470.9 501.5 474.3 498.9 477.6 496.2 480.9 493.3 484.1 490.3 487.2 487.1 490.3 483.8 493.3 480.3 496.2 476.8 499.0 473.0 501.7 469.2 504.4 465.2 506.9 461.2 509.4 457.0 511.8 452.7 514.0 448.3 516.2 443.8 518.3 439.2 520.2 434.5 522.1 429.7 523.8 424.9 525.5 420.0 527.0 415.0 528.4 409.9 529.7 404.8 530.8 399.7 531.9 394.4 532.8 389.2 533.6 383.9 534.3 378.6 534.9 373.3 535.3 367.9 535.6 362.6 535.8 357.2 535.9 351.8 535.8 346.5 535.6 341.1 535.3 335.8 534.9 330.5 534.3 325.2 533.6 320.0 532.8 314.7 531.9 309.6 530.8 304.5 529.7 299.4 528.4 294.4 527.0 289.5 525.5 284.7 523.8 279.9 522.1 275.2 520.2 270.6 518.3 266.1 516.2 261.7 514.0 257.4 511.8 253.2 509.4 249.2 506.9 245.2 504.4 241.4 501.7 237.6 499.0 234.1 496.2 230.6 493.3 227.3 490.3 224.1 487.2 221.1 484.1 218.2 480.9 215.5 477.6 212.9 474.3 210.4 470.9 208.2 467.5 206.1 464.0 204.1 460.5 202.3 456.9 200.7 453.3 199.3 449.6 198.0 445.9 196.9 442.2 196.0 438.5 195.2 434.8 194.6 431.0 194.2 427.2 194.0 423.4 193.9 419.6Z" fill="url(#grg)"/><path d="M193.9 419.6 194.0 423.4 194.2 427.2 194.6 431.0 195.2 434.8 196.0 438.5 196.9 442.2 198.0 445.9 199.3 449.6 200.7 453.3 202.3 456.9 204.1 460.5 206.1 464.0 208.2 467.5 210.4 470.9 212.9 474.3 215.5 477.6 218.2 480.9 221.1 484.1 224.1 487.2 227.3 490.3 230.6 493.3 234.1 496.2 237.6 499.0 241.4 501.7 245.2 504.4 249.2 506.9 253.2 509.4 257.4 511.8 261.7 514.0 266.1 516.2 270.6 518.3 275.2 520.2 279.9 522.1 284.7 523.8 289.5 525.5 294.4 527.0 299.4 528.4 304.5 529.7 309.6 530.8 314.7 531.9 320.0 532.8 325.2 533.6 330.5 534.3 335.8 534.9 341.1 535.3 346.5 535.6 351.8 535.8 357.2 535.9 362.6 535.8 367.9 535.6 373.3 535.3 378.6 534.9 383.9 534.3 389.2 533.6 394.4 532.8 399.7 531.9 404.8 530.8 409.9 529.7 415.0 528.4 420.0 527.0 424.9 525.5 429.7 523.8 434.5 522.1 439.2 520.2 443.8 518.3 448.3 516.2 452.7 514.0 457.0 511.8 461.2 509.4 465.2 506.9 469.2 504.4 473.0 501.7 476.8 499.0 480.3 496.2 483.8 493.3 487.1 490.3 490.3 487.2 493.3 484.1 496.2 480.9 498.9 477.6 501.5 474.3 504.0 470.9 506.2 467.5 508.3 464.0 510.3 460.5 512.1 456.9 513.7 453.3 515.1 449.6 516.4 445.9 517.5 442.2 518.4 438.5 519.2 434.8 519.8 431.0 520.2 427.2 520.4 423.4 520.5 419.6" fill="none" stroke="#576273" stroke-width="1.3"/><path d="M520.7 388.9 520.3 381.4 519.2 373.8 517.4 366.4 515.0 359.0 511.8 351.8 508.0 344.7 503.6 337.9 498.5 331.2 492.8 324.8 486.6 318.7 479.8 312.9 472.5 307.4 464.6 302.2 456.4 297.5 447.7 293.1 438.6 289.1 429.2 285.6 419.5 282.5 409.5 279.8 399.3 277.6 389.0 275.9 378.4 274.7 367.8 274.0 357.2 273.7 346.6 274.0 336.0 274.7 325.4 275.9 315.1 277.6 304.9 279.8 294.9 282.5 285.2 285.6 275.8 289.1 266.7 293.1 258.0 297.5 249.8 302.2 241.9 307.4 234.6 312.9 227.8 318.7 221.6 324.8 215.9 331.2 210.8 337.9 206.4 344.7 202.6 351.8 199.4 359.0 197.0 366.4 195.2 373.8 194.1 381.4 193.7 388.9 194.0 396.5 195.0 404.1 196.7 411.5 199.1 418.9 202.1 426.2 205.9 433.3 210.3 440.2 215.3 446.9 220.9 453.4 227.1 459.6 233.9 465.5 241.2 471.0 249.0 476.2 257.3 481.1 266.0 485.5 275.1 489.5 284.6 493.1 294.4 496.3 304.4 499.0 314.7 501.2 325.2 502.9 335.8 504.2 346.5 504.9 357.2 505.2 367.9 504.9 378.6 504.2 389.2 502.9 399.7 501.2 410.0 499.0 420.0 496.3 429.8 493.1 439.3 489.5 448.4 485.5 457.1 481.1 465.4 476.2 473.2 471.0 480.5 465.5 487.3 459.6 493.5 453.4 499.1 446.9 504.1 440.2 508.5 433.3 512.3 426.2 515.3 418.9 517.7 411.5 519.4 404.1 520.4 396.5Z" fill="#efefef" stroke="#576273" stroke-width="1.3"/></g><path d="M528.7 390.0 528.3 382.1 527.1 374.2 525.3 366.3 522.7 358.6 519.4 351.0 515.4 343.6 510.7 336.4 505.4 329.5 499.4 322.7 492.9 316.3 485.7 310.2 478.1 304.5 469.9 299.1 461.2 294.1 452.1 289.5 442.6 285.3 432.7 281.6 422.5 278.3 412.1 275.6 401.4 273.3 390.5 271.5 379.5 270.2 368.4 269.4 357.2 269.2 346.0 269.4 334.9 270.2 323.9 271.5 313.0 273.3 302.3 275.6 291.9 278.3 281.7 281.6 271.8 285.3 262.3 289.5 253.2 294.1 244.5 299.1 236.3 304.5 228.7 310.2 221.5 316.3 215.0 322.7 209.0 329.5 203.7 336.4 199.0 343.6 195.0 351.0 191.7 358.6 189.1 366.3 187.3 374.2 186.1 382.1 185.7 390.0 186.0 397.9 187.1 405.9 188.8 413.7 191.3 421.5 194.6 429.1 198.5 436.5 203.1 443.8 208.3 450.8 214.2 457.6 220.7 464.1 227.9 470.3 235.5 476.1 243.7 481.6 252.4 486.7 261.5 491.3 271.1 495.5 281.0 499.3 291.3 502.6 301.8 505.5 312.6 507.8 323.6 509.6 334.7 510.9 345.9 511.7 357.2 512.0 368.5 511.7 379.7 510.9 390.8 509.6 401.8 507.8 412.6 505.5 423.1 502.6 433.4 499.3 443.3 495.5 452.9 491.3 462.0 486.7 470.7 481.6 478.9 476.1 486.5 470.3 493.7 464.1 500.2 457.6 506.1 450.8 511.3 443.8 515.9 436.5 519.8 429.1 523.1 421.5 525.6 413.7 527.3 405.9 528.4 397.9Z" fill="none" stroke="#576273" stroke-width="1.3"/><g clip-path="url(#h1)"><path d="M400.6 384.3 428.7 384.5 428.4 383.2 428.1 381.9 427.8 380.6 427.4 379.3 426.9 378.0 426.4 376.8 425.9 375.5 425.3 374.2 424.7 373.0 424.0 371.8 399.5 381.4 399.7 381.7 399.8 382.0 399.9 382.2 400.0 382.5 400.1 382.8 400.2 383.1 400.3 383.4 400.4 383.7 400.5 384.0Z" fill="#f0f0f0"/><path d="M424.0 371.8 399.5 381.4 399.5 400.4 423.9 390.8Z" fill="#d1d1d1"/><path d="M423.9 390.8 399.5 400.4" fill="none" stroke="#576273" stroke-width="1.3"/><path d="M424.0 371.8L423.9 390.8" stroke="#576273" stroke-width="1.3"/><path d="M399.5 381.4L399.5 400.4" stroke="#576273" stroke-width="1.3"/><path d="M428.7 384.5 428.4 383.2 428.1 381.9 427.8 380.6 427.4 379.3 426.9 378.0 426.4 376.8 425.9 375.5 425.3 374.2 424.7 373.0 424.0 371.8 423.9 390.8 424.6 392.1 425.3 393.3 425.8 394.5 426.4 395.8 426.9 397.1 427.3 398.4 427.7 399.7 428.1 401.0 428.4 402.3 428.6 403.6Z" fill="#a7a7a7"/><path d="M428.6 403.6 428.4 402.3 428.1 401.0 427.7 399.7 427.3 398.4 426.9 397.1 426.4 395.8 425.8 394.5 425.3 393.3 424.6 392.1 423.9 390.8" fill="none" stroke="#576273" stroke-width="1.3"/><path d="M428.7 384.5L428.6 403.6" stroke="#576273" stroke-width="1.3"/><path d="M424.0 371.8L423.9 390.8" stroke="#576273" stroke-width="1.3"/></g><path d="M400.6 384.3 428.7 384.5 428.4 383.2 428.1 381.9 427.8 380.6 427.4 379.3 426.9 378.0 426.4 376.8 425.9 375.5 425.3 374.2 424.7 373.0 424.0 371.8 399.5 381.4 399.7 381.7 399.8 382.0 399.9 382.2 400.0 382.5 400.1 382.8 400.2 383.1 400.3 383.4 400.4 383.7 400.5 384.0Z" fill="none" stroke="#576273" stroke-width="1.3" stroke-linejoin="round"/><g clip-path="url(#h2)"><path d="M390.2 369.8 414.7 360.2 413.5 359.2 412.3 358.2 411.1 357.2 409.8 356.2 408.5 355.2 407.2 354.3 405.8 353.4 404.4 352.5 403.0 351.7 401.5 350.8 387.3 367.7 387.6 367.9 387.9 368.1 388.2 368.3 388.5 368.5 388.8 368.7 389.1 369.0 389.4 369.2 389.7 369.4 390.0 369.6Z" fill="#f0f0f0"/><path d="M414.7 360.2 413.5 359.2 412.3 358.2 411.1 357.2 409.8 356.2 408.5 355.2 407.2 354.3 405.8 353.4 404.4 352.5 403.0 351.7 401.5 350.8 401.5 369.9 403.0 370.7 404.4 371.6 405.8 372.5 407.2 373.4 408.5 374.3 409.8 375.2 411.1 376.2 412.3 377.2 413.5 378.2 414.6 379.3Z" fill="#aeaeae"/><path d="M414.6 379.3 413.5 378.2 412.3 377.2 411.1 376.2 409.8 375.2 408.5 374.3 407.2 373.4 405.8 372.5 404.4 371.6 403.0 370.7 401.5 369.9" fill="none" stroke="#576273" stroke-width="1.3"/><path d="M414.7 360.2L414.6 379.3" stroke="#576273" stroke-width="1.3"/><path d="M401.5 350.8L401.5 369.9" stroke="#576273" stroke-width="1.3"/><path d="M401.5 350.8 387.3 367.7 387.2 386.8 401.5 369.9Z" fill="#d4d4d4"/><path d="M401.5 369.9 387.2 386.8" fill="none" stroke="#576273" stroke-width="1.3"/><path d="M401.5 350.8L401.5 369.9" stroke="#576273" stroke-width="1.3"/><path d="M387.3 367.7L387.2 386.8" stroke="#576273" stroke-width="1.3"/></g><path d="M390.2 369.8 414.7 360.2 413.5 359.2 412.3 358.2 411.1 357.2 409.8 356.2 408.5 355.2 407.2 354.3 405.8 353.4 404.4 352.5 403.0 351.7 401.5 350.8 387.3 367.7 387.6 367.9 387.9 368.1 388.2 368.3 388.5 368.5 388.8 368.7 389.1 369.0 389.4 369.2 389.7 369.4 390.0 369.6Z" fill="none" stroke="#576273" stroke-width="1.3" stroke-linejoin="round"/><g clip-path="url(#h3)"><path d="M371.0 361.0 385.2 344.1 383.5 343.6 381.7 343.1 380.0 342.7 378.2 342.3 376.4 341.9 374.6 341.6 372.7 341.3 370.9 341.0 369.0 340.8 367.2 340.6 366.9 360.1 367.3 360.2 367.7 360.3 368.1 360.4 368.5 360.4 368.9 360.5 369.3 360.6 369.7 360.7 370.2 360.8 370.6 360.9Z" fill="#f0f0f0"/><path d="M385.2 344.1 383.5 343.6 381.7 343.1 380.0 342.7 378.2 342.3 376.4 341.9 374.6 341.6 372.7 341.3 370.9 341.0 369.0 340.8 367.2 340.6 367.2 359.6 369.0 359.8 370.9 360.1 372.7 360.3 374.5 360.6 376.4 361.0 378.2 361.3 380.0 361.7 381.7 362.2 383.5 362.7 385.2 363.2Z" fill="#bdbdbd"/><path d="M385.2 363.2 383.5 362.7 381.7 362.2 380.0 361.7 378.2 361.3 376.4 361.0 374.5 360.6 372.7 360.3 370.9 360.1 369.0 359.8 367.2 359.6" fill="none" stroke="#576273" stroke-width="1.3"/><path d="M385.2 344.1L385.2 363.2" stroke="#576273" stroke-width="1.3"/><path d="M367.2 340.6L367.2 359.6" stroke="#576273" stroke-width="1.3"/></g><path d="M371.0 361.0 385.2 344.1 383.5 343.6 381.7 343.1 380.0 342.7 378.2 342.3 376.4 341.9 374.6 341.6 372.7 341.3 370.9 341.0 369.0 340.8 367.2 340.6 366.9 360.1 367.3 360.2 367.7 360.3 368.1 360.4 368.5 360.4 368.9 360.5 369.3 360.6 369.7 360.7 370.2 360.8 370.6 360.9Z" fill="none" stroke="#576273" stroke-width="1.3" stroke-linejoin="round"/><g clip-path="url(#h4)"><path d="M347.9 360.0 348.3 340.4 346.4 340.6 344.5 340.8 342.7 341.0 340.8 341.3 339.0 341.6 337.2 342.0 335.4 342.3 333.6 342.7 331.8 343.2 330.1 343.7 343.8 360.7 344.2 360.7 344.6 360.6 345.0 360.5 345.4 360.4 345.9 360.3 346.3 360.3 346.7 360.2 347.1 360.1 347.5 360.1Z" fill="#f0f0f0"/><path d="M348.3 340.4 346.4 340.6 344.5 340.8 342.7 341.0 340.8 341.3 339.0 341.6 337.2 342.0 335.4 342.3 333.6 342.7 331.8 343.2 330.1 343.7 330.1 362.7 331.8 362.2 333.6 361.8 335.4 361.4 337.2 361.0 339.0 360.7 340.9 360.4 342.7 360.1 344.5 359.9 346.4 359.6 348.3 359.5Z" fill="#cccccc"/><path d="M348.3 359.5 346.4 359.6 344.5 359.9 342.7 360.1 340.9 360.4 339.0 360.7 337.2 361.0 335.4 361.4 333.6 361.8 331.8 362.2 330.1 362.7" fill="none" stroke="#576273" stroke-width="1.3"/><path d="M348.3 340.4L348.3 359.5" stroke="#576273" stroke-width="1.3"/><path d="M330.1 343.7L330.1 362.7" stroke="#576273" stroke-width="1.3"/></g><path d="M347.9 360.0 348.3 340.4 346.4 340.6 344.5 340.8 342.7 341.0 340.8 341.3 339.0 341.6 337.2 342.0 335.4 342.3 333.6 342.7 331.8 343.2 330.1 343.7 343.8 360.7 344.2 360.7 344.6 360.6 345.0 360.5 345.4 360.4 345.9 360.3 346.3 360.3 346.7 360.2 347.1 360.1 347.5 360.1Z" fill="none" stroke="#576273" stroke-width="1.3" stroke-linejoin="round"/><g clip-path="url(#h5)"><path d="M327.3 367.2 313.6 350.1 312.1 350.9 310.6 351.8 309.2 352.6 307.8 353.5 306.4 354.4 305.1 355.4 303.8 356.3 302.5 357.3 301.3 358.3 300.1 359.3 324.2 369.3 324.5 369.1 324.8 368.9 325.1 368.7 325.4 368.5 325.7 368.2 326.0 368.0 326.3 367.8 326.7 367.6 327.0 367.4Z" fill="#f0f0f0"/><path d="M313.6 350.1 312.1 350.9 310.6 351.8 309.2 352.6 307.8 353.5 306.4 354.4 305.1 355.4 303.8 356.3 302.5 357.3 301.3 358.3 300.1 359.3 300.2 378.4 301.4 377.3 302.6 376.3 303.8 375.4 305.1 374.4 306.5 373.5 307.8 372.6 309.2 371.7 310.6 370.8 312.1 370.0 313.6 369.2Z" fill="#d3d3d3"/><path d="M313.6 369.2 312.1 370.0 310.6 370.8 309.2 371.7 307.8 372.6 306.5 373.5 305.1 374.4 303.8 375.4 302.6 376.3 301.4 377.3 300.2 378.4" fill="none" stroke="#576273" stroke-width="1.3"/><path d="M313.6 350.1L313.6 369.2" stroke="#576273" stroke-width="1.3"/><path d="M300.1 359.3L300.2 378.4" stroke="#576273" stroke-width="1.3"/><path d="M327.3 367.2 313.6 350.1 313.6 369.2 327.3 386.3Z" fill="#a9a9a9"/><path d="M327.3 386.3 313.6 369.2" fill="none" stroke="#576273" stroke-width="1.3"/><path d="M327.3 367.2L327.3 386.3" stroke="#576273" stroke-width="1.3"/><path d="M313.6 350.1L313.6 369.2" stroke="#576273" stroke-width="1.3"/></g><path d="M327.3 367.2 313.6 350.1 312.1 350.9 310.6 351.8 309.2 352.6 307.8 353.5 306.4 354.4 305.1 355.4 303.8 356.3 302.5 357.3 301.3 358.3 300.1 359.3 324.2 369.3 324.5 369.1 324.8 368.9 325.1 368.7 325.4 368.5 325.7 368.2 326.0 368.0 326.3 367.8 326.7 367.6 327.0 367.4Z" fill="none" stroke="#576273" stroke-width="1.3" stroke-linejoin="round"/><g clip-path="url(#h6)"><path d="M314.6 380.7 290.4 370.7 289.7 371.9 289.0 373.2 288.4 374.4 287.8 375.7 287.3 376.9 286.8 378.2 286.4 379.5 286.0 380.8 285.6 382.1 285.3 383.4 313.4 383.6 313.5 383.3 313.6 383.0 313.7 382.7 313.8 382.4 313.9 382.1 314.1 381.9 314.2 381.6 314.3 381.3 314.4 381.0Z" fill="#f0f0f0"/><path d="M314.6 380.7 290.4 370.7 290.5 389.8 314.6 399.8Z" fill="#b3b3b3"/><path d="M314.6 399.8 290.5 389.8" fill="none" stroke="#576273" stroke-width="1.3"/><path d="M314.6 380.7L314.6 399.8" stroke="#576273" stroke-width="1.3"/><path d="M290.4 370.7L290.5 389.8" stroke="#576273" stroke-width="1.3"/><path d="M290.4 370.7 289.7 371.9 289.0 373.2 288.4 374.4 287.8 375.7 287.3 376.9 286.8 378.2 286.4 379.5 286.0 380.8 285.6 382.1 285.3 383.4 285.4 402.4 285.7 401.1 286.0 399.8 286.4 398.5 286.9 397.3 287.4 396.0 287.9 394.7 288.5 393.5 289.1 392.2 289.8 391.0 290.5 389.8Z" fill="#d5d5d5"/><path d="M290.5 389.8 289.8 391.0 289.1 392.2 288.5 393.5 287.9 394.7 287.4 396.0 286.9 397.3 286.4 398.5 286.0 399.8 285.7 401.1 285.4 402.4" fill="none" stroke="#576273" stroke-width="1.3"/><path d="M290.4 370.7L290.5 389.8" stroke="#576273" stroke-width="1.3"/><path d="M285.3 383.4L285.4 402.4" stroke="#576273" stroke-width="1.3"/></g><path d="M314.6 380.7 290.4 370.7 289.7 371.9 289.0 373.2 288.4 374.4 287.8 375.7 287.3 376.9 286.8 378.2 286.4 379.5 286.0 380.8 285.6 382.1 285.3 383.4 313.4 383.6 313.5 383.3 313.6 383.0 313.7 382.7 313.8 382.4 313.9 382.1 314.1 381.9 314.2 381.6 314.3 381.3 314.4 381.0Z" fill="none" stroke="#576273" stroke-width="1.3" stroke-linejoin="round"/><g clip-path="url(#h7)"><path d="M313.2 396.9 285.1 396.6 285.3 397.9 285.6 399.2 286.0 400.5 286.4 401.8 286.8 403.1 287.3 404.4 287.8 405.7 288.4 406.9 289.0 408.2 289.7 409.4 314.2 399.7 314.1 399.5 314.0 399.2 313.9 398.9 313.8 398.6 313.6 398.3 313.5 398.0 313.4 397.7 313.3 397.4 313.3 397.1Z" fill="#f0f0f0"/><path d="M313.2 396.9 285.1 396.6 285.1 415.7 313.2 415.9Z" fill="#c7c7c7"/><path d="M313.2 415.9 285.1 415.7" fill="none" stroke="#576273" stroke-width="1.3"/><path d="M313.2 396.9L313.2 415.9" stroke="#576273" stroke-width="1.3"/><path d="M285.1 396.6L285.1 415.7" stroke="#576273" stroke-width="1.3"/><path d="M314.2 399.7 314.1 399.5 314.0 399.2 313.9 398.9 313.8 398.6 313.6 398.3 313.5 398.0 313.4 397.7 313.3 397.4 313.3 397.1 313.2 396.9 313.2 415.9 313.3 416.2 313.4 416.5 313.5 416.8 313.6 417.1 313.7 417.4 313.8 417.7 313.9 417.9 314.0 418.2 314.1 418.5 314.3 418.8Z" fill="#a7a7a7"/><path d="M314.3 418.8 314.1 418.5 314.0 418.2 313.9 417.9 313.8 417.7 313.7 417.4 313.6 417.1 313.5 416.8 313.4 416.5 313.3 416.2 313.2 415.9" fill="none" stroke="#576273" stroke-width="1.3"/><path d="M314.2 399.7L314.3 418.8" stroke="#576273" stroke-width="1.3"/><path d="M313.2 396.9L313.2 415.9" stroke="#576273" stroke-width="1.3"/></g><path d="M313.2 396.9 285.1 396.6 285.3 397.9 285.6 399.2 286.0 400.5 286.4 401.8 286.8 403.1 287.3 404.4 287.8 405.7 288.4 406.9 289.0 408.2 289.7 409.4 314.2 399.7 314.1 399.5 314.0 399.2 313.9 398.9 313.8 398.6 313.6 398.3 313.5 398.0 313.4 397.7 313.3 397.4 313.3 397.1Z" fill="none" stroke="#576273" stroke-width="1.3" stroke-linejoin="round"/><g clip-path="url(#h8)"><path d="M323.5 411.3 299.0 421.0 300.1 422.0 301.3 423.1 302.6 424.1 303.8 425.0 305.1 426.0 306.5 426.9 307.8 427.8 309.2 428.7 310.7 429.6 312.1 430.4 326.5 413.5 326.2 413.3 325.9 413.1 325.6 412.8 325.3 412.6 325.0 412.4 324.7 412.2 324.4 412.0 324.1 411.8 323.8 411.6Z" fill="#f0f0f0"/><path d="M326.5 413.5 326.2 413.3 325.9 413.1 325.6 412.8 325.3 412.6 325.0 412.4 324.7 412.2 324.4 412.0 324.1 411.8 323.8 411.6 323.5 411.3 323.5 430.4 323.8 430.6 324.1 430.8 324.4 431.1 324.7 431.3 325.0 431.5 325.3 431.7 325.6 431.9 325.9 432.1 326.2 432.3 326.5 432.5Z" fill="#aeaeae"/><path d="M326.5 432.5 326.2 432.3 325.9 432.1 325.6 431.9 325.3 431.7 325.0 431.5 324.7 431.3 324.4 431.1 324.1 430.8 323.8 430.6 323.5 430.4" fill="none" stroke="#576273" stroke-width="1.3"/><path d="M326.5 413.5L326.5 432.5" stroke="#576273" stroke-width="1.3"/><path d="M323.5 411.3L323.5 430.4" stroke="#576273" stroke-width="1.3"/><path d="M323.5 411.3 299.0 421.0 299.0 440.0 323.5 430.4Z" fill="#d1d1d1"/><path d="M323.5 430.4 299.0 440.0" fill="none" stroke="#576273" stroke-width="1.3"/><path d="M323.5 411.3L323.5 430.4" stroke="#576273" stroke-width="1.3"/><path d="M299.0 421.0L299.0 440.0" stroke="#576273" stroke-width="1.3"/></g><path d="M323.5 411.3 299.0 421.0 300.1 422.0 301.3 423.1 302.6 424.1 303.8 425.0 305.1 426.0 306.5 426.9 307.8 427.8 309.2 428.7 310.7 429.6 312.1 430.4 326.5 413.5 326.2 413.3 325.9 413.1 325.6 412.8 325.3 412.6 325.0 412.4 324.7 412.2 324.4 412.0 324.1 411.8 323.8 411.6Z" fill="none" stroke="#576273" stroke-width="1.3" stroke-linejoin="round"/><g clip-path="url(#h9)"><path d="M342.8 420.2 328.5 437.2 330.2 437.7 332.0 438.2 333.7 438.6 335.5 439.0 337.4 439.4 339.2 439.7 341.0 440.0 342.9 440.3 344.7 440.6 346.6 440.8 346.9 421.1 346.5 421.0 346.1 420.9 345.7 420.8 345.3 420.8 344.8 420.7 344.4 420.6 344.0 420.5 343.6 420.4 343.2 420.3Z" fill="#f0f0f0"/><path d="M346.9 421.1 346.5 421.0 346.1 420.9 345.7 420.8 345.3 420.8 344.8 420.7 344.4 420.6 344.0 420.5 343.6 420.4 343.2 420.3 342.8 420.2 342.8 439.3 343.2 439.4 343.6 439.5 344.0 439.6 344.4 439.7 344.9 439.7 345.3 439.8 345.7 439.9 346.1 440.0 346.5 440.0 346.9 440.1Z" fill="#bdbdbd"/><path d="M346.9 440.1 346.5 440.0 346.1 440.0 345.7 439.9 345.3 439.8 344.9 439.7 344.4 439.7 344.0 439.6 343.6 439.5 343.2 439.4 342.8 439.3" fill="none" stroke="#576273" stroke-width="1.3"/><path d="M346.9 421.1L346.9 440.1" stroke="#576273" stroke-width="1.3"/><path d="M342.8 420.2L342.8 439.3" stroke="#576273" stroke-width="1.3"/><path d="M342.8 420.2 328.5 437.2 328.5 456.3 342.8 439.3Z" fill="#d4d4d4"/><path d="M342.8 439.3 328.5 456.3" fill="none" stroke="#576273" stroke-width="1.3"/><path d="M342.8 420.2L342.8 439.3" stroke="#576273" stroke-width="1.3"/><path d="M328.5 437.2L328.5 456.3" stroke="#576273" stroke-width="1.3"/></g><path d="M342.8 420.2 328.5 437.2 330.2 437.7 332.0 438.2 333.7 438.6 335.5 439.0 337.4 439.4 339.2 439.7 341.0 440.0 342.9 440.3 344.7 440.6 346.6 440.8 346.9 421.1 346.5 421.0 346.1 420.9 345.7 420.8 345.3 420.8 344.8 420.7 344.4 420.6 344.0 420.5 343.6 420.4 343.2 420.3Z" fill="none" stroke="#576273" stroke-width="1.3" stroke-linejoin="round"/><g clip-path="url(#h10)"><path d="M365.9 421.2 365.6 440.9 367.5 440.7 369.3 440.5 371.2 440.3 373.0 440.0 374.9 439.7 376.7 439.4 378.5 439.0 380.3 438.6 382.1 438.1 383.8 437.6 370.0 420.5 369.6 420.5 369.2 420.6 368.8 420.7 368.4 420.8 368.0 420.9 367.6 420.9 367.1 421.0 366.7 421.1 366.3 421.1Z" fill="#f0f0f0"/><path d="M370.0 420.5 369.6 420.5 369.2 420.6 368.8 420.7 368.4 420.8 368.0 420.9 367.6 420.9 367.1 421.0 366.7 421.1 366.3 421.1 365.9 421.2 365.9 440.3 366.3 440.2 366.7 440.1 367.1 440.1 367.6 440.0 368.0 439.9 368.4 439.9 368.8 439.8 369.2 439.7 369.6 439.6 370.0 439.5Z" fill="#cccccc"/><path d="M370.0 439.5 369.6 439.6 369.2 439.7 368.8 439.8 368.4 439.9 368.0 439.9 367.6 440.0 367.1 440.1 366.7 440.1 366.3 440.2 365.9 440.3" fill="none" stroke="#576273" stroke-width="1.3"/><path d="M370.0 420.5L370.0 439.5" stroke="#576273" stroke-width="1.3"/><path d="M365.9 421.2L365.9 440.3" stroke="#576273" stroke-width="1.3"/><path d="M383.8 437.6 370.0 420.5 370.0 439.5 383.8 456.7Z" fill="#a9a9a9"/><path d="M383.8 456.7 370.0 439.5" fill="none" stroke="#576273" stroke-width="1.3"/><path d="M383.8 437.6L383.8 456.7" stroke="#576273" stroke-width="1.3"/><path d="M370.0 420.5L370.0 439.5" stroke="#576273" stroke-width="1.3"/></g><path d="M365.9 421.2 365.6 440.9 367.5 440.7 369.3 440.5 371.2 440.3 373.0 440.0 374.9 439.7 376.7 439.4 378.5 439.0 380.3 438.6 382.1 438.1 383.8 437.6 370.0 420.5 369.6 420.5 369.2 420.6 368.8 420.7 368.4 420.8 368.0 420.9 367.6 420.9 367.1 421.0 366.7 421.1 366.3 421.1Z" fill="none" stroke="#576273" stroke-width="1.3" stroke-linejoin="round"/><g clip-path="url(#h11)"><path d="M386.6 413.9 400.4 431.1 401.9 430.3 403.3 429.5 404.8 428.6 406.2 427.7 407.5 426.8 408.9 425.9 410.1 424.9 411.4 423.9 412.6 422.9 413.8 421.9 389.6 411.9 389.3 412.1 389.0 412.3 388.7 412.5 388.4 412.7 388.1 412.9 387.8 413.1 387.5 413.3 387.2 413.5 386.9 413.7Z" fill="#f0f0f0"/><path d="M389.6 411.9 389.3 412.1 389.0 412.3 388.7 412.5 388.4 412.7 388.1 412.9 387.8 413.1 387.5 413.3 387.2 413.5 386.9 413.7 386.6 413.9 386.5 433.0 386.9 432.8 387.2 432.6 387.5 432.4 387.8 432.2 388.1 432.0 388.4 431.8 388.7 431.6 389.0 431.3 389.3 431.1 389.6 430.9Z" fill="#d3d3d3"/><path d="M389.6 430.9 389.3 431.1 389.0 431.3 388.7 431.6 388.4 431.8 388.1 432.0 387.8 432.2 387.5 432.4 387.2 432.6 386.9 432.8 386.5 433.0" fill="none" stroke="#576273" stroke-width="1.3"/><path d="M389.6 411.9L389.6 430.9" stroke="#576273" stroke-width="1.3"/><path d="M386.6 413.9L386.5 433.0" stroke="#576273" stroke-width="1.3"/><path d="M413.8 421.9 389.6 411.9 389.6 430.9 413.8 441.0Z" fill="#b3b3b3"/><path d="M413.8 441.0 389.6 430.9" fill="none" stroke="#576273" stroke-width="1.3"/><path d="M413.8 421.9L413.8 441.0" stroke="#576273" stroke-width="1.3"/><path d="M389.6 411.9L389.6 430.9" stroke="#576273" stroke-width="1.3"/></g><path d="M386.6 413.9 400.4 431.1 401.9 430.3 403.3 429.5 404.8 428.6 406.2 427.7 407.5 426.8 408.9 425.9 410.1 424.9 411.4 423.9 412.6 422.9 413.8 421.9 389.6 411.9 389.3 412.1 389.0 412.3 388.7 412.5 388.4 412.7 388.1 412.9 387.8 413.1 387.5 413.3 387.2 413.5 386.9 413.7Z" fill="none" stroke="#576273" stroke-width="1.3" stroke-linejoin="round"/><g clip-path="url(#h12)"><path d="M399.3 400.4 423.5 410.5 424.2 409.2 424.8 408.0 425.5 406.8 426.0 405.5 426.6 404.2 427.1 403.0 427.5 401.7 427.9 400.4 428.2 399.1 428.5 397.8 400.4 397.5 400.3 397.8 400.2 398.1 400.1 398.4 400.0 398.7 399.9 399.0 399.8 399.3 399.7 399.6 399.5 399.9 399.4 400.1Z" fill="#f0f0f0"/><path d="M428.5 397.8 400.4 397.5 400.4 416.6 428.4 416.8Z" fill="#c7c7c7"/><path d="M428.4 416.8 400.4 416.6" fill="none" stroke="#576273" stroke-width="1.3"/><path d="M428.5 397.8L428.4 416.8" stroke="#576273" stroke-width="1.3"/><path d="M400.4 397.5L400.4 416.6" stroke="#576273" stroke-width="1.3"/><path d="M400.4 397.5 400.3 397.8 400.2 398.1 400.1 398.4 400.0 398.7 399.9 399.0 399.8 399.3 399.7 399.6 399.5 399.9 399.4 400.1 399.3 400.4 399.2 419.5 399.4 419.2 399.5 418.9 399.6 418.6 399.7 418.3 399.9 418.1 400.0 417.8 400.1 417.5 400.2 417.2 400.3 416.9 400.4 416.6Z" fill="#d5d5d5"/><path d="M400.4 416.6 400.3 416.9 400.2 417.2 400.1 417.5 400.0 417.8 399.9 418.1 399.7 418.3 399.6 418.6 399.5 418.9 399.4 419.2 399.2 419.5" fill="none" stroke="#576273" stroke-width="1.3"/><path d="M400.4 397.5L400.4 416.6" stroke="#576273" stroke-width="1.3"/><path d="M399.3 400.4L399.2 419.5" stroke="#576273" stroke-width="1.3"/></g><path d="M399.3 400.4 423.5 410.5 424.2 409.2 424.8 408.0 425.5 406.8 426.0 405.5 426.6 404.2 427.1 403.0 427.5 401.7 427.9 400.4 428.2 399.1 428.5 397.8 400.4 397.5 400.3 397.8 400.2 398.1 400.1 398.4 400.0 398.7 399.9 399.0 399.8 399.3 399.7 399.6 399.5 399.9 399.4 400.1Z" fill="none" stroke="#576273" stroke-width="1.3" stroke-linejoin="round"/><g clip-path="url(#h13)"><path d="M447.1 384.6 465.2 384.8 464.8 382.2 464.3 379.5 463.7 376.9 462.9 374.3 462.1 371.7 461.0 369.2 459.9 366.7 458.6 364.2 457.3 361.7 455.7 359.3 440.0 365.5 441.1 367.3 442.1 369.2 443.0 371.0 443.8 372.9 444.6 374.9 445.3 376.8 445.8 378.7 446.3 380.7 446.7 382.7Z" fill="#f0f0f0"/><path d="M455.7 359.3 440.0 365.5 439.9 384.5 455.7 378.3Z" fill="#d1d1d1"/><path d="M455.7 378.3 439.9 384.5" fill="none" stroke="#576273" stroke-width="1.3"/><path d="M455.7 359.3L455.7 378.3" stroke="#576273" stroke-width="1.3"/><path d="M440.0 365.5L439.9 384.5" stroke="#576273" stroke-width="1.3"/><path d="M465.2 384.8 464.8 382.2 464.3 379.5 463.7 376.9 462.9 374.3 462.1 371.7 461.0 369.2 459.9 366.7 458.6 364.2 457.3 361.7 455.7 359.3 455.7 378.3 457.2 380.7 458.6 383.2 459.8 385.7 461.0 388.2 462.0 390.8 462.9 393.4 463.6 396.0 464.2 398.6 464.7 401.2 465.1 403.9Z" fill="#a7a7a7"/><path d="M465.1 403.9 464.7 401.2 464.2 398.6 463.6 396.0 462.9 393.4 462.0 390.8 461.0 388.2 459.8 385.7 458.6 383.2 457.2 380.7 455.7 378.3" fill="none" stroke="#576273" stroke-width="1.3"/><path d="M465.2 384.8L465.1 403.9" stroke="#576273" stroke-width="1.3"/><path d="M455.7 359.3L455.7 378.3" stroke="#576273" stroke-width="1.3"/></g><path d="M447.1 384.6 465.2 384.8 464.8 382.2 464.3 379.5 463.7 376.9 462.9 374.3 462.1 371.7 461.0 369.2 459.9 366.7 458.6 364.2 457.3 361.7 455.7 359.3 440.0 365.5 441.1 367.3 442.1 369.2 443.0 371.0 443.8 372.9 444.6 374.9 445.3 376.8 445.8 378.7 446.3 380.7 446.7 382.7Z" fill="none" stroke="#576273" stroke-width="1.3" stroke-linejoin="round"/><g clip-path="url(#h14)"><path d="M430.7 353.9 446.4 347.7 444.2 345.6 441.9 343.5 439.5 341.4 437.0 339.4 434.4 337.5 431.7 335.7 428.9 333.9 426.1 332.2 423.1 330.5 420.1 328.9 410.9 339.8 413.1 341.0 415.3 342.3 417.5 343.6 419.5 344.9 421.6 346.3 423.5 347.8 425.4 349.2 427.2 350.8 429.0 352.3Z" fill="#f0f0f0"/><path d="M420.1 328.9 410.9 339.8 410.8 358.9 420.0 348.0Z" fill="#d4d4d4"/><path d="M420.0 348.0 410.8 358.9" fill="none" stroke="#576273" stroke-width="1.3"/><path d="M420.1 328.9L420.0 348.0" stroke="#576273" stroke-width="1.3"/><path d="M410.9 339.8L410.8 358.9" stroke="#576273" stroke-width="1.3"/><path d="M446.4 347.7 444.2 345.6 441.9 343.5 439.5 341.4 437.0 339.4 434.4 337.5 431.7 335.7 428.9 333.9 426.1 332.2 423.1 330.5 420.1 328.9 420.0 348.0 423.1 349.6 426.0 351.2 428.9 352.9 431.7 354.7 434.4 356.6 437.0 358.5 439.5 360.5 441.9 362.5 444.2 364.6 446.4 366.8Z" fill="#aeaeae"/><path d="M446.4 366.8 444.2 364.6 441.9 362.5 439.5 360.5 437.0 358.5 434.4 356.6 431.7 354.7 428.9 352.9 426.0 351.2 423.1 349.6 420.0 348.0" fill="none" stroke="#576273" stroke-width="1.3"/><path d="M446.4 347.7L446.4 366.8" stroke="#576273" stroke-width="1.3"/><path d="M420.1 328.9L420.0 348.0" stroke="#576273" stroke-width="1.3"/></g><path d="M430.7 353.9 446.4 347.7 444.2 345.6 441.9 343.5 439.5 341.4 437.0 339.4 434.4 337.5 431.7 335.7 428.9 333.9 426.1 332.2 423.1 330.5 420.1 328.9 410.9 339.8 413.1 341.0 415.3 342.3 417.5 343.6 419.5 344.9 421.6 346.3 423.5 347.8 425.4 349.2 427.2 350.8 429.0 352.3Z" fill="none" stroke="#576273" stroke-width="1.3" stroke-linejoin="round"/><g clip-path="url(#h15)"><path d="M394.6 333.1 403.8 322.2 400.3 321.1 396.9 320.1 393.3 319.2 389.7 318.3 386.1 317.6 382.5 316.9 378.8 316.3 375.1 315.8 371.3 315.4 367.6 315.1 367.4 327.7 370.2 328.0 373.0 328.3 375.8 328.7 378.5 329.2 381.3 329.7 384.0 330.2 386.7 330.8 389.4 331.5 392.0 332.3Z" fill="#f0f0f0"/><path d="M403.8 322.2 400.3 321.1 396.9 320.1 393.3 319.2 389.7 318.3 386.1 317.6 382.5 316.9 378.8 316.3 375.1 315.8 371.3 315.4 367.6 315.1 367.6 334.2 371.3 334.5 375.0 334.9 378.8 335.4 382.4 335.9 386.1 336.6 389.7 337.4 393.3 338.2 396.8 339.1 400.3 340.2 403.8 341.3Z" fill="#bdbdbd"/><path d="M403.8 341.3 400.3 340.2 396.8 339.1 393.3 338.2 389.7 337.4 386.1 336.6 382.4 335.9 378.8 335.4 375.0 334.9 371.3 334.5 367.6 334.2" fill="none" stroke="#576273" stroke-width="1.3"/><path d="M403.8 322.2L403.8 341.3" stroke="#576273" stroke-width="1.3"/><path d="M367.6 315.1L367.6 334.2" stroke="#576273" stroke-width="1.3"/></g><path d="M394.6 333.1 403.8 322.2 400.3 321.1 396.9 320.1 393.3 319.2 389.7 318.3 386.1 317.6 382.5 316.9 378.8 316.3 375.1 315.8 371.3 315.4 367.6 315.1 367.4 327.7 370.2 328.0 373.0 328.3 375.8 328.7 378.5 329.2 381.3 329.7 384.0 330.2 386.7 330.8 389.4 331.5 392.0 332.3Z" fill="none" stroke="#576273" stroke-width="1.3" stroke-linejoin="round"/><g clip-path="url(#h16)"><path d="M348.5 327.6 348.7 315.0 344.9 315.2 341.2 315.6 337.4 316.0 333.7 316.5 330.1 317.1 326.4 317.8 322.8 318.6 319.2 319.5 315.7 320.4 312.2 321.5 321.1 332.5 323.7 331.7 326.4 331.0 329.1 330.4 331.8 329.8 334.5 329.3 337.3 328.8 340.0 328.4 342.8 328.1 345.6 327.8Z" fill="#f0f0f0"/><path d="M348.7 315.0 344.9 315.2 341.2 315.6 337.4 316.0 333.7 316.5 330.1 317.1 326.4 317.8 322.8 318.6 319.2 319.5 315.7 320.4 312.2 321.5 312.3 340.5 315.7 339.5 319.3 338.5 322.8 337.7 326.4 336.9 330.1 336.2 333.8 335.6 337.5 335.0 341.2 334.6 344.9 334.3 348.7 334.0Z" fill="#cccccc"/><path d="M348.7 334.0 344.9 334.3 341.2 334.6 337.5 335.0 333.8 335.6 330.1 336.2 326.4 336.9 322.8 337.7 319.3 338.5 315.7 339.5 312.3 340.5" fill="none" stroke="#576273" stroke-width="1.3"/><path d="M348.7 315.0L348.7 334.0" stroke="#576273" stroke-width="1.3"/><path d="M312.2 321.5L312.3 340.5" stroke="#576273" stroke-width="1.3"/></g><path d="M348.5 327.6 348.7 315.0 344.9 315.2 341.2 315.6 337.4 316.0 333.7 316.5 330.1 317.1 326.4 317.8 322.8 318.6 319.2 319.5 315.7 320.4 312.2 321.5 321.1 332.5 323.7 331.7 326.4 331.0 329.1 330.4 331.8 329.8 334.5 329.3 337.3 328.8 340.0 328.4 342.8 328.1 345.6 327.8Z" fill="none" stroke="#576273" stroke-width="1.3" stroke-linejoin="round"/><g clip-path="url(#h17)"><path d="M304.6 339.0 295.8 327.9 292.7 329.5 289.7 331.1 286.7 332.8 283.9 334.5 281.1 336.3 278.5 338.2 275.9 340.1 273.4 342.1 271.1 344.2 268.8 346.3 284.4 352.8 286.1 351.2 287.9 349.7 289.8 348.2 291.7 346.7 293.7 345.3 295.8 343.9 297.9 342.6 300.1 341.4 302.3 340.1Z" fill="#f0f0f0"/><path d="M304.6 339.0 295.8 327.9 295.8 347.0 304.6 358.0Z" fill="#a9a9a9"/><path d="M304.6 358.0 295.8 347.0" fill="none" stroke="#576273" stroke-width="1.3"/><path d="M304.6 339.0L304.6 358.0" stroke="#576273" stroke-width="1.3"/><path d="M295.8 327.9L295.8 347.0" stroke="#576273" stroke-width="1.3"/><path d="M295.8 327.9 292.7 329.5 289.7 331.1 286.7 332.8 283.9 334.5 281.1 336.3 278.5 338.2 275.9 340.1 273.4 342.1 271.1 344.2 268.8 346.3 268.9 365.4 271.1 363.3 273.5 361.2 276.0 359.2 278.5 357.2 281.2 355.4 283.9 353.6 286.8 351.8 289.7 350.1 292.7 348.5 295.8 347.0Z" fill="#d3d3d3"/><path d="M295.8 347.0 292.7 348.5 289.7 350.1 286.8 351.8 283.9 353.6 281.2 355.4 278.5 357.2 276.0 359.2 273.5 361.2 271.1 363.3 268.9 365.4" fill="none" stroke="#576273" stroke-width="1.3"/><path d="M295.8 327.9L295.8 347.0" stroke="#576273" stroke-width="1.3"/><path d="M268.8 346.3L268.9 365.4" stroke="#576273" stroke-width="1.3"/></g><path d="M304.6 339.0 295.8 327.9 292.7 329.5 289.7 331.1 286.7 332.8 283.9 334.5 281.1 336.3 278.5 338.2 275.9 340.1 273.4 342.1 271.1 344.2 268.8 346.3 284.4 352.8 286.1 351.2 287.9 349.7 289.8 348.2 291.7 346.7 293.7 345.3 295.8 343.9 297.9 342.6 300.1 341.4 302.3 340.1Z" fill="none" stroke="#576273" stroke-width="1.3" stroke-linejoin="round"/><g clip-path="url(#h18)"><path d="M274.7 364.2 259.1 357.7 257.5 360.1 256.0 362.5 254.7 365.0 253.5 367.5 252.4 370.1 251.4 372.6 250.6 375.2 249.9 377.8 249.3 380.4 248.8 383.1 267.0 383.2 267.3 381.2 267.8 379.3 268.4 377.3 269.0 375.4 269.7 373.5 270.6 371.6 271.5 369.7 272.4 367.8 273.5 366.0Z" fill="#f0f0f0"/><path d="M274.7 364.2 259.1 357.7 259.2 376.8 274.7 383.2Z" fill="#b3b3b3"/><path d="M274.7 383.2 259.2 376.8" fill="none" stroke="#576273" stroke-width="1.3"/><path d="M274.7 364.2L274.7 383.2" stroke="#576273" stroke-width="1.3"/><path d="M259.1 357.7L259.2 376.8" stroke="#576273" stroke-width="1.3"/><path d="M259.1 357.7 257.5 360.1 256.0 362.5 254.7 365.0 253.5 367.5 252.4 370.1 251.4 372.6 250.6 375.2 249.9 377.8 249.3 380.4 248.8 383.1 248.9 402.1 249.4 399.5 249.9 396.9 250.7 394.3 251.5 391.7 252.5 389.1 253.6 386.6 254.8 384.1 256.1 381.6 257.6 379.2 259.2 376.8Z" fill="#d5d5d5"/><path d="M259.2 376.8 257.6 379.2 256.1 381.6 254.8 384.1 253.6 386.6 252.5 389.1 251.5 391.7 250.7 394.3 249.9 396.9 249.4 399.5 248.9 402.1" fill="none" stroke="#576273" stroke-width="1.3"/><path d="M259.1 357.7L259.2 376.8" stroke="#576273" stroke-width="1.3"/><path d="M248.8 383.1L248.9 402.1" stroke="#576273" stroke-width="1.3"/></g><path d="M274.7 364.2 259.1 357.7 257.5 360.1 256.0 362.5 254.7 365.0 253.5 367.5 252.4 370.1 251.4 372.6 250.6 375.2 249.9 377.8 249.3 380.4 248.8 383.1 267.0 383.2 267.3 381.2 267.8 379.3 268.4 377.3 269.0 375.4 269.7 373.5 270.6 371.6 271.5 369.7 272.4 367.8 273.5 366.0Z" fill="none" stroke="#576273" stroke-width="1.3" stroke-linejoin="round"/><g clip-path="url(#h19)"><path d="M266.7 396.5 248.6 396.3 248.9 399.0 249.4 401.6 250.0 404.2 250.7 406.8 251.6 409.4 252.6 412.0 253.7 414.5 254.9 417.0 256.3 419.5 257.8 421.9 273.7 415.7 272.6 413.9 271.6 412.0 270.7 410.1 269.8 408.2 269.1 406.3 268.4 404.3 267.9 402.4 267.4 400.4 267.0 398.5Z" fill="#f0f0f0"/><path d="M266.7 396.5 248.6 396.3 248.6 415.4 266.8 415.5Z" fill="#c7c7c7"/><path d="M266.8 415.5 248.6 415.4" fill="none" stroke="#576273" stroke-width="1.3"/><path d="M266.7 396.5L266.8 415.5" stroke="#576273" stroke-width="1.3"/><path d="M248.6 396.3L248.6 415.4" stroke="#576273" stroke-width="1.3"/><path d="M273.7 415.7 272.6 413.9 271.6 412.0 270.7 410.1 269.8 408.2 269.1 406.3 268.4 404.3 267.9 402.4 267.4 400.4 267.0 398.5 266.7 396.5 266.8 415.5 267.1 417.5 267.5 419.5 267.9 421.5 268.5 423.4 269.2 425.3 269.9 427.3 270.7 429.2 271.6 431.1 272.6 432.9 273.7 434.8Z" fill="#a7a7a7"/><path d="M273.7 434.8 272.6 432.9 271.6 431.1 270.7 429.2 269.9 427.3 269.2 425.3 268.5 423.4 267.9 421.5 267.5 419.5 267.1 417.5 266.8 415.5" fill="none" stroke="#576273" stroke-width="1.3"/><path d="M273.7 415.7L273.7 434.8" stroke="#576273" stroke-width="1.3"/><path d="M266.7 396.5L266.8 415.5" stroke="#576273" stroke-width="1.3"/></g><path d="M266.7 396.5 248.6 396.3 248.9 399.0 249.4 401.6 250.0 404.2 250.7 406.8 251.6 409.4 252.6 412.0 253.7 414.5 254.9 417.0 256.3 419.5 257.8 421.9 273.7 415.7 272.6 413.9 271.6 412.0 270.7 410.1 269.8 408.2 269.1 406.3 268.4 404.3 267.9 402.4 267.4 400.4 267.0 398.5Z" fill="none" stroke="#576273" stroke-width="1.3" stroke-linejoin="round"/><g clip-path="url(#h20)"><path d="M282.9 427.3 267.1 433.5 269.3 435.7 271.6 437.8 274.0 439.9 276.5 441.9 279.1 443.8 281.8 445.7 284.5 447.5 287.4 449.2 290.4 450.9 293.4 452.5 302.7 441.5 300.5 440.3 298.3 439.0 296.1 437.7 294.0 436.4 292.0 435.0 290.1 433.5 288.2 432.0 286.4 430.5 284.6 428.9Z" fill="#f0f0f0"/><path d="M282.9 427.3 267.1 433.5 267.1 452.6 283.0 446.4Z" fill="#d1d1d1"/><path d="M283.0 446.4 267.1 452.6" fill="none" stroke="#576273" stroke-width="1.3"/><path d="M282.9 427.3L283.0 446.4" stroke="#576273" stroke-width="1.3"/><path d="M267.1 433.5L267.1 452.6" stroke="#576273" stroke-width="1.3"/><path d="M302.7 441.5 300.5 440.3 298.3 439.0 296.1 437.7 294.0 436.4 292.0 435.0 290.1 433.5 288.2 432.0 286.4 430.5 284.6 428.9 282.9 427.3 283.0 446.4 284.7 448.0 286.4 449.5 288.2 451.1 290.1 452.6 292.1 454.0 294.1 455.4 296.2 456.8 298.3 458.1 300.5 459.4 302.8 460.6Z" fill="#aeaeae"/><path d="M302.8 460.6 300.5 459.4 298.3 458.1 296.2 456.8 294.1 455.4 292.1 454.0 290.1 452.6 288.2 451.1 286.4 449.5 284.7 448.0 283.0 446.4" fill="none" stroke="#576273" stroke-width="1.3"/><path d="M302.7 441.5L302.8 460.6" stroke="#576273" stroke-width="1.3"/><path d="M282.9 427.3L283.0 446.4" stroke="#576273" stroke-width="1.3"/></g><path d="M282.9 427.3 267.1 433.5 269.3 435.7 271.6 437.8 274.0 439.9 276.5 441.9 279.1 443.8 281.8 445.7 284.5 447.5 287.4 449.2 290.4 450.9 293.4 452.5 302.7 441.5 300.5 440.3 298.3 439.0 296.1 437.7 294.0 436.4 292.0 435.0 290.1 433.5 288.2 432.0 286.4 430.5 284.6 428.9Z" fill="none" stroke="#576273" stroke-width="1.3" stroke-linejoin="round"/><g clip-path="url(#h21)"><path d="M319.1 448.3 309.8 459.3 313.2 460.4 316.7 461.4 320.3 462.4 323.9 463.2 327.5 464.0 331.2 464.7 334.9 465.2 338.6 465.7 342.4 466.1 346.2 466.5 346.4 453.7 343.5 453.4 340.7 453.1 337.9 452.7 335.2 452.3 332.4 451.8 329.7 451.2 327.0 450.6 324.3 449.9 321.7 449.1Z" fill="#f0f0f0"/><path d="M346.4 453.7 343.5 453.4 340.7 453.1 337.9 452.7 335.2 452.3 332.4 451.8 329.7 451.2 327.0 450.6 324.3 449.9 321.7 449.1 319.1 448.3 319.1 467.4 321.7 468.2 324.3 468.9 327.0 469.6 329.7 470.2 332.4 470.8 335.2 471.3 338.0 471.8 340.7 472.2 343.6 472.5 346.4 472.7Z" fill="#bdbdbd"/><path d="M346.4 472.7 343.6 472.5 340.7 472.2 338.0 471.8 335.2 471.3 332.4 470.8 329.7 470.2 327.0 469.6 324.3 468.9 321.7 468.2 319.1 467.4" fill="none" stroke="#576273" stroke-width="1.3"/><path d="M346.4 453.7L346.4 472.7" stroke="#576273" stroke-width="1.3"/><path d="M319.1 448.3L319.1 467.4" stroke="#576273" stroke-width="1.3"/><path d="M319.1 448.3 309.8 459.3 309.8 478.4 319.1 467.4Z" fill="#d4d4d4"/><path d="M319.1 467.4 309.8 478.4" fill="none" stroke="#576273" stroke-width="1.3"/><path d="M319.1 448.3L319.1 467.4" stroke="#576273" stroke-width="1.3"/><path d="M309.8 459.3L309.8 478.4" stroke="#576273" stroke-width="1.3"/></g><path d="M319.1 448.3 309.8 459.3 313.2 460.4 316.7 461.4 320.3 462.4 323.9 463.2 327.5 464.0 331.2 464.7 334.9 465.2 338.6 465.7 342.4 466.1 346.2 466.5 346.4 453.7 343.5 453.4 340.7 453.1 337.9 452.7 335.2 452.3 332.4 451.8 329.7 451.2 327.0 450.6 324.3 449.9 321.7 449.1Z" fill="none" stroke="#576273" stroke-width="1.3" stroke-linejoin="round"/><g clip-path="url(#h22)"><path d="M365.4 453.8 365.2 466.6 369.0 466.4 372.7 466.0 376.5 465.6 380.2 465.1 383.9 464.4 387.6 463.7 391.2 462.9 394.8 462.1 398.3 461.1 401.8 460.0 392.9 448.9 390.2 449.7 387.6 450.4 384.9 451.0 382.1 451.6 379.4 452.1 376.6 452.6 373.8 453.0 371.0 453.3 368.2 453.6Z" fill="#f0f0f0"/><path d="M392.9 448.9 390.2 449.7 387.6 450.4 384.9 451.0 382.1 451.6 379.4 452.1 376.6 452.6 373.8 453.0 371.0 453.3 368.2 453.6 365.4 453.8 365.4 472.9 368.2 472.7 371.0 472.4 373.8 472.1 376.6 471.7 379.4 471.2 382.1 470.7 384.9 470.1 387.5 469.4 390.2 468.7 392.8 468.0Z" fill="#cccccc"/><path d="M392.8 468.0 390.2 468.7 387.5 469.4 384.9 470.1 382.1 470.7 379.4 471.2 376.6 471.7 373.8 472.1 371.0 472.4 368.2 472.7 365.4 472.9" fill="none" stroke="#576273" stroke-width="1.3"/><path d="M392.9 448.9L392.8 468.0" stroke="#576273" stroke-width="1.3"/><path d="M365.4 453.8L365.4 472.9" stroke="#576273" stroke-width="1.3"/><path d="M401.8 460.0 392.9 448.9 392.8 468.0 401.8 479.1Z" fill="#a9a9a9"/><path d="M401.8 479.1 392.8 468.0" fill="none" stroke="#576273" stroke-width="1.3"/><path d="M401.8 460.0L401.8 479.1" stroke="#576273" stroke-width="1.3"/><path d="M392.9 448.9L392.8 468.0" stroke="#576273" stroke-width="1.3"/></g><path d="M365.4 453.8 365.2 466.6 369.0 466.4 372.7 466.0 376.5 465.6 380.2 465.1 383.9 464.4 387.6 463.7 391.2 462.9 394.8 462.1 398.3 461.1 401.8 460.0 392.9 448.9 390.2 449.7 387.6 450.4 384.9 451.0 382.1 451.6 379.4 452.1 376.6 452.6 373.8 453.0 371.0 453.3 368.2 453.6Z" fill="none" stroke="#576273" stroke-width="1.3" stroke-linejoin="round"/><g clip-path="url(#h23)"><path d="M409.4 442.4 418.3 453.5 421.4 451.9 424.5 450.3 427.4 448.6 430.2 446.9 433.0 445.1 435.7 443.2 438.2 441.2 440.7 439.2 443.1 437.1 445.3 435.0 429.7 428.5 427.9 430.1 426.1 431.6 424.3 433.1 422.3 434.6 420.3 436.0 418.3 437.4 416.1 438.7 413.9 440.0 411.7 441.2Z" fill="#f0f0f0"/><path d="M445.3 435.0 429.7 428.5 429.6 447.5 445.2 454.0Z" fill="#b3b3b3"/><path d="M445.2 454.0 429.6 447.5" fill="none" stroke="#576273" stroke-width="1.3"/><path d="M445.3 435.0L445.2 454.0" stroke="#576273" stroke-width="1.3"/><path d="M429.7 428.5L429.6 447.5" stroke="#576273" stroke-width="1.3"/><path d="M429.7 428.5 427.9 430.1 426.1 431.6 424.3 433.1 422.3 434.6 420.3 436.0 418.3 437.4 416.1 438.7 413.9 440.0 411.7 441.2 409.4 442.4 409.4 461.4 411.7 460.3 413.9 459.0 416.1 457.7 418.2 456.4 420.3 455.0 422.3 453.6 424.2 452.2 426.1 450.7 427.9 449.1 429.6 447.5Z" fill="#d3d3d3"/><path d="M429.6 447.5 427.9 449.1 426.1 450.7 424.2 452.2 422.3 453.6 420.3 455.0 418.2 456.4 416.1 457.7 413.9 459.0 411.7 460.3 409.4 461.4" fill="none" stroke="#576273" stroke-width="1.3"/><path d="M429.7 428.5L429.6 447.5" stroke="#576273" stroke-width="1.3"/><path d="M409.4 442.4L409.4 461.4" stroke="#576273" stroke-width="1.3"/></g><path d="M409.4 442.4 418.3 453.5 421.4 451.9 424.5 450.3 427.4 448.6 430.2 446.9 433.0 445.1 435.7 443.2 438.2 441.2 440.7 439.2 443.1 437.1 445.3 435.0 429.7 428.5 427.9 430.1 426.1 431.6 424.3 433.1 422.3 434.6 420.3 436.0 418.3 437.4 416.1 438.7 413.9 440.0 411.7 441.2Z" fill="none" stroke="#576273" stroke-width="1.3" stroke-linejoin="round"/><g clip-path="url(#h24)"><path d="M439.3 417.0 454.9 423.5 456.5 421.1 458.0 418.6 459.3 416.2 460.5 413.6 461.6 411.1 462.5 408.5 463.3 405.9 464.0 403.3 464.6 400.7 465.0 398.1 446.9 397.9 446.5 399.9 446.1 401.9 445.5 403.8 444.9 405.8 444.2 407.7 443.4 409.6 442.5 411.5 441.5 413.4 440.4 415.2Z" fill="#f0f0f0"/><path d="M465.0 398.1 446.9 397.9 446.8 417.0 464.9 417.1Z" fill="#c7c7c7"/><path d="M464.9 417.1 446.8 417.0" fill="none" stroke="#576273" stroke-width="1.3"/><path d="M465.0 398.1L464.9 417.1" stroke="#576273" stroke-width="1.3"/><path d="M446.9 397.9L446.8 417.0" stroke="#576273" stroke-width="1.3"/><path d="M446.9 397.9 446.5 399.9 446.1 401.9 445.5 403.8 444.9 405.8 444.2 407.7 443.4 409.6 442.5 411.5 441.5 413.4 440.4 415.2 439.3 417.0 439.2 436.1 440.4 434.3 441.4 432.4 442.4 430.5 443.3 428.6 444.1 426.7 444.8 424.8 445.5 422.9 446.0 420.9 446.5 419.0 446.8 417.0Z" fill="#d5d5d5"/><path d="M446.8 417.0 446.5 419.0 446.0 420.9 445.5 422.9 444.8 424.8 444.1 426.7 443.3 428.6 442.4 430.5 441.4 432.4 440.4 434.3 439.2 436.1" fill="none" stroke="#576273" stroke-width="1.3"/><path d="M446.9 397.9L446.8 417.0" stroke="#576273" stroke-width="1.3"/><path d="M439.3 417.0L439.2 436.1" stroke="#576273" stroke-width="1.3"/></g><path d="M439.3 417.0 454.9 423.5 456.5 421.1 458.0 418.6 459.3 416.2 460.5 413.6 461.6 411.1 462.5 408.5 463.3 405.9 464.0 403.3 464.6 400.7 465.0 398.1 446.9 397.9 446.5 399.9 446.1 401.9 445.5 403.8 444.9 405.8 444.2 407.7 443.4 409.6 442.5 411.5 441.5 413.4 440.4 415.2Z" fill="none" stroke="#576273" stroke-width="1.3" stroke-linejoin="round"/><g clip-path="url(#h25)"><path d="M483.7 384.9 501.6 385.1 501.1 381.1 500.5 377.2 499.6 373.2 498.5 369.3 497.2 365.4 495.6 361.6 493.9 357.8 491.9 354.1 489.8 350.4 487.4 346.8 471.8 352.9 473.8 356.0 475.6 359.0 477.2 362.2 478.6 365.3 479.9 368.5 481.0 371.8 481.9 375.0 482.7 378.3 483.3 381.6Z" fill="#f0f0f0"/><path d="M487.4 346.8 471.8 352.9 471.8 372.0 487.3 365.9Z" fill="#d1d1d1"/><path d="M487.3 365.9 471.8 372.0" fill="none" stroke="#576273" stroke-width="1.3"/><path d="M487.4 346.8L487.3 365.9" stroke="#576273" stroke-width="1.3"/><path d="M471.8 352.9L471.8 372.0" stroke="#576273" stroke-width="1.3"/><path d="M501.6 385.1 501.1 381.1 500.5 377.2 499.6 373.2 498.5 369.3 497.2 365.4 495.6 361.6 493.9 357.8 491.9 354.1 489.8 350.4 487.4 346.8 487.3 365.9 489.7 369.5 491.8 373.2 493.8 376.9 495.5 380.7 497.1 384.5 498.4 388.4 499.5 392.3 500.4 396.2 501.0 400.2 501.5 404.1Z" fill="#a7a7a7"/><path d="M501.5 404.1 501.0 400.2 500.4 396.2 499.5 392.3 498.4 388.4 497.1 384.5 495.5 380.7 493.8 376.9 491.8 373.2 489.7 369.5 487.3 365.9" fill="none" stroke="#576273" stroke-width="1.3"/><path d="M501.6 385.1L501.5 404.1" stroke="#576273" stroke-width="1.3"/><path d="M487.4 346.8L487.3 365.9" stroke="#576273" stroke-width="1.3"/></g><path d="M483.7 384.9 501.6 385.1 501.1 381.1 500.5 377.2 499.6 373.2 498.5 369.3 497.2 365.4 495.6 361.6 493.9 357.8 491.9 354.1 489.8 350.4 487.4 346.8 471.8 352.9 473.8 356.0 475.6 359.0 477.2 362.2 478.6 365.3 479.9 368.5 481.0 371.8 481.9 375.0 482.7 378.3 483.3 381.6Z" fill="none" stroke="#576273" stroke-width="1.3" stroke-linejoin="round"/><g clip-path="url(#h26)"><path d="M462.5 341.4 478.1 335.3 474.8 332.0 471.5 328.8 467.9 325.7 464.2 322.7 460.3 319.8 456.2 317.1 452.0 314.4 447.6 311.9 443.1 309.4 438.5 307.1 429.5 317.8 433.3 319.8 437.0 321.8 440.7 324.0 444.2 326.2 447.6 328.5 450.8 330.9 453.9 333.4 456.9 336.0 459.8 338.7Z" fill="#f0f0f0"/><path d="M438.5 307.1 429.5 317.8 429.4 336.9 438.5 326.2Z" fill="#d4d4d4"/><path d="M438.5 326.2 429.4 336.9" fill="none" stroke="#576273" stroke-width="1.3"/><path d="M438.5 307.1L438.5 326.2" stroke="#576273" stroke-width="1.3"/><path d="M429.5 317.8L429.4 336.9" stroke="#576273" stroke-width="1.3"/><path d="M478.1 335.3 474.8 332.0 471.5 328.8 467.9 325.7 464.2 322.7 460.3 319.8 456.2 317.1 452.0 314.4 447.6 311.9 443.1 309.4 438.5 307.1 438.5 326.2 443.1 328.5 447.6 330.9 451.9 333.5 456.1 336.1 460.2 338.9 464.1 341.8 467.8 344.8 471.4 347.9 474.8 351.1 478.0 354.3Z" fill="#aeaeae"/><path d="M478.0 354.3 474.8 351.1 471.4 347.9 467.8 344.8 464.1 341.8 460.2 338.9 456.1 336.1 451.9 333.5 447.6 330.9 443.1 328.5 438.5 326.2" fill="none" stroke="#576273" stroke-width="1.3"/><path d="M478.1 335.3L478.0 354.3" stroke="#576273" stroke-width="1.3"/><path d="M438.5 307.1L438.5 326.2" stroke="#576273" stroke-width="1.3"/></g><path d="M462.5 341.4 478.1 335.3 474.8 332.0 471.5 328.8 467.9 325.7 464.2 322.7 460.3 319.8 456.2 317.1 452.0 314.4 447.6 311.9 443.1 309.4 438.5 307.1 429.5 317.8 433.3 319.8 437.0 321.8 440.7 324.0 444.2 326.2 447.6 328.5 450.8 330.9 453.9 333.4 456.9 336.0 459.8 338.7Z" fill="none" stroke="#576273" stroke-width="1.3" stroke-linejoin="round"/><g clip-path="url(#h27)"><path d="M413.2 311.1 422.2 300.4 417.1 298.7 411.9 297.1 406.6 295.7 401.3 294.4 395.9 293.2 390.4 292.3 384.8 291.4 379.2 290.7 373.6 290.2 368.0 289.8 367.8 302.2 372.5 302.6 377.2 303.1 381.8 303.6 386.5 304.4 391.1 305.2 395.6 306.1 400.1 307.2 404.5 308.4 408.9 309.7Z" fill="#f0f0f0"/><path d="M422.2 300.4 417.1 298.7 411.9 297.1 406.6 295.7 401.3 294.4 395.9 293.2 390.4 292.3 384.8 291.4 379.2 290.7 373.6 290.2 368.0 289.8 368.0 308.9 373.6 309.2 379.2 309.8 384.8 310.5 390.3 311.3 395.8 312.3 401.2 313.4 406.6 314.7 411.9 316.2 417.1 317.7 422.2 319.5Z" fill="#bdbdbd"/><path d="M422.2 319.5 417.1 317.7 411.9 316.2 406.6 314.7 401.2 313.4 395.8 312.3 390.3 311.3 384.8 310.5 379.2 309.8 373.6 309.2 368.0 308.9" fill="none" stroke="#576273" stroke-width="1.3"/><path d="M422.2 300.4L422.2 319.5" stroke="#576273" stroke-width="1.3"/><path d="M368.0 289.8L368.0 308.9" stroke="#576273" stroke-width="1.3"/></g><path d="M413.2 311.1 422.2 300.4 417.1 298.7 411.9 297.1 406.6 295.7 401.3 294.4 395.9 293.2 390.4 292.3 384.8 291.4 379.2 290.7 373.6 290.2 368.0 289.8 367.8 302.2 372.5 302.6 377.2 303.1 381.8 303.6 386.5 304.4 391.1 305.2 395.6 306.1 400.1 307.2 404.5 308.4 408.9 309.7Z" fill="none" stroke="#576273" stroke-width="1.3" stroke-linejoin="round"/><g clip-path="url(#h28)"><path d="M348.9 302.1 349.1 289.7 343.4 290.0 337.8 290.4 332.2 291.0 326.6 291.7 321.1 292.7 315.7 293.7 310.2 294.9 304.9 296.3 299.7 297.8 294.5 299.4 303.2 310.2 307.6 308.9 312.0 307.7 316.4 306.6 320.9 305.6 325.5 304.7 330.1 303.9 334.8 303.3 339.5 302.8 344.2 302.4Z" fill="#f0f0f0"/><path d="M349.1 289.7 343.4 290.0 337.8 290.4 332.2 291.0 326.6 291.7 321.1 292.7 315.7 293.7 310.2 294.9 304.9 296.3 299.7 297.8 294.5 299.4 294.5 318.5 299.7 316.8 305.0 315.3 310.3 314.0 315.7 312.8 321.1 311.7 326.7 310.8 332.2 310.1 337.8 309.5 343.5 309.0 349.1 308.7Z" fill="#cccccc"/><path d="M349.1 308.7 343.5 309.0 337.8 309.5 332.2 310.1 326.7 310.8 321.1 311.7 315.7 312.8 310.3 314.0 305.0 315.3 299.7 316.8 294.5 318.5" fill="none" stroke="#576273" stroke-width="1.3"/><path d="M349.1 289.7L349.1 308.7" stroke="#576273" stroke-width="1.3"/><path d="M294.5 299.4L294.5 318.5" stroke="#576273" stroke-width="1.3"/></g><path d="M348.9 302.1 349.1 289.7 343.4 290.0 337.8 290.4 332.2 291.0 326.6 291.7 321.1 292.7 315.7 293.7 310.2 294.9 304.9 296.3 299.7 297.8 294.5 299.4 303.2 310.2 307.6 308.9 312.0 307.7 316.4 306.6 320.9 305.6 325.5 304.7 330.1 303.9 334.8 303.3 339.5 302.8 344.2 302.4Z" fill="none" stroke="#576273" stroke-width="1.3" stroke-linejoin="round"/><g clip-path="url(#h29)"><path d="M286.7 316.7 278.0 305.9 273.3 308.1 268.7 310.4 264.3 312.9 260.0 315.5 255.9 318.2 251.9 321.0 248.1 324.0 244.4 327.0 240.9 330.1 237.6 333.4 252.9 339.7 255.7 337.1 258.7 334.4 261.7 331.9 264.9 329.5 268.3 327.1 271.7 324.8 275.3 322.7 279.0 320.6 282.8 318.6Z" fill="#f0f0f0"/><path d="M286.7 316.7 278.0 305.9 278.1 324.9 286.8 335.8Z" fill="#a9a9a9"/><path d="M286.8 335.8 278.1 324.9" fill="none" stroke="#576273" stroke-width="1.3"/><path d="M286.7 316.7L286.8 335.8" stroke="#576273" stroke-width="1.3"/><path d="M278.0 305.9L278.1 324.9" stroke="#576273" stroke-width="1.3"/><path d="M278.0 305.9 273.3 308.1 268.7 310.4 264.3 312.9 260.0 315.5 255.9 318.2 251.9 321.0 248.1 324.0 244.4 327.0 240.9 330.1 237.6 333.4 237.7 352.4 241.0 349.2 244.5 346.1 248.1 343.0 252.0 340.1 255.9 337.3 260.1 334.6 264.4 332.0 268.8 329.5 273.4 327.1 278.1 324.9Z" fill="#d3d3d3"/><path d="M278.1 324.9 273.4 327.1 268.8 329.5 264.4 332.0 260.1 334.6 255.9 337.3 252.0 340.1 248.1 343.0 244.5 346.1 241.0 349.2 237.7 352.4" fill="none" stroke="#576273" stroke-width="1.3"/><path d="M278.0 305.9L278.1 324.9" stroke="#576273" stroke-width="1.3"/><path d="M237.6 333.4L237.7 352.4" stroke="#576273" stroke-width="1.3"/></g><path d="M286.7 316.7 278.0 305.9 273.3 308.1 268.7 310.4 264.3 312.9 260.0 315.5 255.9 318.2 251.9 321.0 248.1 324.0 244.4 327.0 240.9 330.1 237.6 333.4 252.9 339.7 255.7 337.1 258.7 334.4 261.7 331.9 264.9 329.5 268.3 327.1 271.7 324.8 275.3 322.7 279.0 320.6 282.8 318.6Z" fill="none" stroke="#576273" stroke-width="1.3" stroke-linejoin="round"/><g clip-path="url(#h30)"><path d="M243.2 351.1 227.9 344.7 225.4 348.3 223.1 352.0 221.0 355.7 219.2 359.4 217.5 363.2 216.0 367.1 214.8 371.0 213.8 374.9 213.0 378.8 212.4 382.8 230.3 382.9 230.8 379.6 231.5 376.3 232.4 373.1 233.4 369.8 234.6 366.6 236.0 363.4 237.6 360.3 239.3 357.2 241.2 354.1Z" fill="#f0f0f0"/><path d="M243.2 351.1 227.9 344.7 228.0 363.8 243.3 370.2Z" fill="#b3b3b3"/><path d="M243.3 370.2 228.0 363.8" fill="none" stroke="#576273" stroke-width="1.3"/><path d="M243.2 351.1L243.3 370.2" stroke="#576273" stroke-width="1.3"/><path d="M227.9 344.7L228.0 363.8" stroke="#576273" stroke-width="1.3"/><path d="M227.9 344.7 225.4 348.3 223.1 352.0 221.0 355.7 219.2 359.4 217.5 363.2 216.0 367.1 214.8 371.0 213.8 374.9 213.0 378.8 212.4 382.8 212.5 401.8 213.1 397.9 213.9 393.9 214.9 390.0 216.1 386.1 217.6 382.3 219.3 378.5 221.1 374.7 223.2 371.0 225.5 367.4 228.0 363.8Z" fill="#d5d5d5"/><path d="M228.0 363.8 225.5 367.4 223.2 371.0 221.1 374.7 219.3 378.5 217.6 382.3 216.1 386.1 214.9 390.0 213.9 393.9 213.1 397.9 212.5 401.8" fill="none" stroke="#576273" stroke-width="1.3"/><path d="M227.9 344.7L228.0 363.8" stroke="#576273" stroke-width="1.3"/><path d="M212.4 382.8L212.5 401.8" stroke="#576273" stroke-width="1.3"/></g><path d="M243.2 351.1 227.9 344.7 225.4 348.3 223.1 352.0 221.0 355.7 219.2 359.4 217.5 363.2 216.0 367.1 214.8 371.0 213.8 374.9 213.0 378.8 212.4 382.8 230.3 382.9 230.8 379.6 231.5 376.3 232.4 373.1 233.4 369.8 234.6 366.6 236.0 363.4 237.6 360.3 239.3 357.2 241.2 354.1Z" fill="none" stroke="#576273" stroke-width="1.3" stroke-linejoin="round"/><g clip-path="url(#h31)"><path d="M230.0 396.2 212.2 396.1 212.5 400.0 213.2 404.0 214.0 407.9 215.1 411.8 216.4 415.7 217.9 419.6 219.6 423.4 221.5 427.1 223.6 430.8 226.0 434.5 241.6 428.3 239.7 425.3 237.9 422.2 236.4 419.0 234.9 415.8 233.7 412.6 232.6 409.4 231.7 406.1 231.0 402.8 230.4 399.5Z" fill="#f0f0f0"/><path d="M230.0 396.2 212.2 396.1 212.3 415.1 230.1 415.3Z" fill="#c7c7c7"/><path d="M230.1 415.3 212.3 415.1" fill="none" stroke="#576273" stroke-width="1.3"/><path d="M230.0 396.2L230.1 415.3" stroke="#576273" stroke-width="1.3"/><path d="M212.2 396.1L212.3 415.1" stroke="#576273" stroke-width="1.3"/><path d="M241.6 428.3 239.7 425.3 237.9 422.2 236.4 419.0 234.9 415.8 233.7 412.6 232.6 409.4 231.7 406.1 231.0 402.8 230.4 399.5 230.0 396.2 230.1 415.3 230.5 418.6 231.1 421.9 231.8 425.2 232.7 428.4 233.8 431.7 235.0 434.9 236.4 438.1 238.0 441.2 239.8 444.3 241.7 447.4Z" fill="#a7a7a7"/><path d="M241.7 447.4 239.8 444.3 238.0 441.2 236.4 438.1 235.0 434.9 233.8 431.7 232.7 428.4 231.8 425.2 231.1 421.9 230.5 418.6 230.1 415.3" fill="none" stroke="#576273" stroke-width="1.3"/><path d="M241.6 428.3L241.7 447.4" stroke="#576273" stroke-width="1.3"/><path d="M230.0 396.2L230.1 415.3" stroke="#576273" stroke-width="1.3"/></g><path d="M230.0 396.2 212.2 396.1 212.5 400.0 213.2 404.0 214.0 407.9 215.1 411.8 216.4 415.7 217.9 419.6 219.6 423.4 221.5 427.1 223.6 430.8 226.0 434.5 241.6 428.3 239.7 425.3 237.9 422.2 236.4 419.0 234.9 415.8 233.7 412.6 232.6 409.4 231.7 406.1 231.0 402.8 230.4 399.5Z" fill="none" stroke="#576273" stroke-width="1.3" stroke-linejoin="round"/><g clip-path="url(#h32)"><path d="M250.9 439.9 235.2 446.1 238.4 449.4 241.8 452.6 245.4 455.7 249.1 458.8 253.0 461.7 257.0 464.5 261.2 467.2 265.6 469.8 270.1 472.2 274.8 474.5 283.9 463.7 280.1 461.7 276.3 459.7 272.7 457.5 269.2 455.2 265.8 452.9 262.5 450.5 259.4 447.9 256.4 445.3 253.6 442.7Z" fill="#f0f0f0"/><path d="M250.9 439.9 235.2 446.1 235.3 465.1 251.0 459.0Z" fill="#d1d1d1"/><path d="M251.0 459.0 235.3 465.1" fill="none" stroke="#576273" stroke-width="1.3"/><path d="M250.9 439.9L251.0 459.0" stroke="#576273" stroke-width="1.3"/><path d="M235.2 446.1L235.3 465.1" stroke="#576273" stroke-width="1.3"/><path d="M283.9 463.7 280.1 461.7 276.3 459.7 272.7 457.5 269.2 455.2 265.8 452.9 262.5 450.5 259.4 447.9 256.4 445.3 253.6 442.7 250.9 439.9 251.0 459.0 253.7 461.7 256.5 464.4 259.5 467.0 262.6 469.5 265.9 472.0 269.3 474.3 272.8 476.6 276.4 478.7 280.1 480.8 284.0 482.8Z" fill="#aeaeae"/><path d="M284.0 482.8 280.1 480.8 276.4 478.7 272.8 476.6 269.3 474.3 265.9 472.0 262.6 469.5 259.5 467.0 256.5 464.4 253.7 461.7 251.0 459.0" fill="none" stroke="#576273" stroke-width="1.3"/><path d="M283.9 463.7L284.0 482.8" stroke="#576273" stroke-width="1.3"/><path d="M250.9 439.9L251.0 459.0" stroke="#576273" stroke-width="1.3"/></g><path d="M250.9 439.9 235.2 446.1 238.4 449.4 241.8 452.6 245.4 455.7 249.1 458.8 253.0 461.7 257.0 464.5 261.2 467.2 265.6 469.8 270.1 472.2 274.8 474.5 283.9 463.7 280.1 461.7 276.3 459.7 272.7 457.5 269.2 455.2 265.8 452.9 262.5 450.5 259.4 447.9 256.4 445.3 253.6 442.7Z" fill="none" stroke="#576273" stroke-width="1.3" stroke-linejoin="round"/><g clip-path="url(#h33)"><path d="M300.3 470.5 291.1 481.4 296.2 483.1 301.5 484.7 306.8 486.2 312.2 487.5 317.7 488.6 323.2 489.6 328.8 490.5 334.4 491.2 340.1 491.7 345.7 492.1 345.9 479.5 341.2 479.1 336.5 478.7 331.8 478.1 327.1 477.4 322.5 476.5 317.9 475.5 313.4 474.5 309.0 473.3 304.6 471.9Z" fill="#f0f0f0"/><path d="M345.9 479.5 341.2 479.1 336.5 478.7 331.8 478.1 327.1 477.4 322.5 476.5 317.9 475.5 313.4 474.5 309.0 473.3 304.6 471.9 300.3 470.5 300.3 489.6 304.6 491.0 309.0 492.3 313.5 493.5 318.0 494.6 322.5 495.6 327.1 496.4 331.8 497.1 336.5 497.7 341.2 498.2 346.0 498.6Z" fill="#bdbdbd"/><path d="M346.0 498.6 341.2 498.2 336.5 497.7 331.8 497.1 327.1 496.4 322.5 495.6 318.0 494.6 313.5 493.5 309.0 492.3 304.6 491.0 300.3 489.6" fill="none" stroke="#576273" stroke-width="1.3"/><path d="M345.9 479.5L346.0 498.6" stroke="#576273" stroke-width="1.3"/><path d="M300.3 470.5L300.3 489.6" stroke="#576273" stroke-width="1.3"/><path d="M300.3 470.5 291.1 481.4 291.1 500.4 300.3 489.6Z" fill="#d4d4d4"/><path d="M300.3 489.6 291.1 500.4" fill="none" stroke="#576273" stroke-width="1.3"/><path d="M300.3 470.5L300.3 489.6" stroke="#576273" stroke-width="1.3"/><path d="M291.1 481.4L291.1 500.4" stroke="#576273" stroke-width="1.3"/></g><path d="M300.3 470.5 291.1 481.4 296.2 483.1 301.5 484.7 306.8 486.2 312.2 487.5 317.7 488.6 323.2 489.6 328.8 490.5 334.4 491.2 340.1 491.7 345.7 492.1 345.9 479.5 341.2 479.1 336.5 478.7 331.8 478.1 327.1 477.4 322.5 476.5 317.9 475.5 313.4 474.5 309.0 473.3 304.6 471.9Z" fill="none" stroke="#576273" stroke-width="1.3" stroke-linejoin="round"/><g clip-path="url(#h34)"><path d="M365.0 479.6 364.8 492.3 370.5 492.0 376.1 491.5 381.8 490.9 387.4 490.1 393.0 489.2 398.5 488.2 403.9 486.9 409.3 485.6 414.6 484.0 419.7 482.4 410.9 471.4 406.6 472.8 402.1 474.0 397.6 475.1 393.1 476.1 388.5 477.0 383.9 477.8 379.2 478.4 374.5 479.0 369.7 479.4Z" fill="#f0f0f0"/><path d="M410.9 471.4 406.6 472.8 402.1 474.0 397.6 475.1 393.1 476.1 388.5 477.0 383.9 477.8 379.2 478.4 374.5 479.0 369.7 479.4 365.0 479.6 365.0 498.7 369.7 498.4 374.4 498.0 379.2 497.5 383.8 496.9 388.5 496.1 393.1 495.2 397.6 494.2 402.1 493.1 406.5 491.8 410.9 490.4Z" fill="#cccccc"/><path d="M410.9 490.4 406.5 491.8 402.1 493.1 397.6 494.2 393.1 495.2 388.5 496.1 383.8 496.9 379.2 497.5 374.4 498.0 369.7 498.4 365.0 498.7" fill="none" stroke="#576273" stroke-width="1.3"/><path d="M410.9 471.4L410.9 490.4" stroke="#576273" stroke-width="1.3"/><path d="M365.0 479.6L365.0 498.7" stroke="#576273" stroke-width="1.3"/><path d="M419.7 482.4 410.9 471.4 410.9 490.4 419.7 501.4Z" fill="#a9a9a9"/><path d="M419.7 501.4 410.9 490.4" fill="none" stroke="#576273" stroke-width="1.3"/><path d="M419.7 482.4L419.7 501.4" stroke="#576273" stroke-width="1.3"/><path d="M410.9 471.4L410.9 490.4" stroke="#576273" stroke-width="1.3"/></g><path d="M365.0 479.6 364.8 492.3 370.5 492.0 376.1 491.5 381.8 490.9 387.4 490.1 393.0 489.2 398.5 488.2 403.9 486.9 409.3 485.6 414.6 484.0 419.7 482.4 410.9 471.4 406.6 472.8 402.1 474.0 397.6 475.1 393.1 476.1 388.5 477.0 383.9 477.8 379.2 478.4 374.5 479.0 369.7 479.4Z" fill="none" stroke="#576273" stroke-width="1.3" stroke-linejoin="round"/><g clip-path="url(#h35)"><path d="M427.5 464.8 436.3 475.8 441.0 473.6 445.6 471.2 450.0 468.7 454.3 466.1 458.5 463.3 462.5 460.5 466.3 457.5 470.0 454.4 473.5 451.3 476.8 448.0 461.3 441.6 458.5 444.3 455.6 446.9 452.5 449.5 449.3 451.9 446.0 454.3 442.5 456.6 438.9 458.8 435.2 460.9 431.4 462.9Z" fill="#f0f0f0"/><path d="M476.8 448.0 461.3 441.6 461.2 460.7 476.7 467.1Z" fill="#b3b3b3"/><path d="M476.7 467.1 461.2 460.7" fill="none" stroke="#576273" stroke-width="1.3"/><path d="M476.8 448.0L476.7 467.1" stroke="#576273" stroke-width="1.3"/><path d="M461.3 441.6L461.2 460.7" stroke="#576273" stroke-width="1.3"/><path d="M461.3 441.6 458.5 444.3 455.6 446.9 452.5 449.5 449.3 451.9 446.0 454.3 442.5 456.6 438.9 458.8 435.2 460.9 431.4 462.9 427.5 464.8 427.4 483.9 431.3 482.0 435.1 480.0 438.8 477.9 442.4 475.7 445.9 473.4 449.2 471.0 452.4 468.5 455.5 466.0 458.4 463.4 461.2 460.7Z" fill="#d3d3d3"/><path d="M461.2 460.7 458.4 463.4 455.5 466.0 452.4 468.5 449.2 471.0 445.9 473.4 442.4 475.7 438.8 477.9 435.1 480.0 431.3 482.0 427.4 483.9" fill="none" stroke="#576273" stroke-width="1.3"/><path d="M461.3 441.6L461.2 460.7" stroke="#576273" stroke-width="1.3"/><path d="M427.5 464.8L427.4 483.9" stroke="#576273" stroke-width="1.3"/></g><path d="M427.5 464.8 436.3 475.8 441.0 473.6 445.6 471.2 450.0 468.7 454.3 466.1 458.5 463.3 462.5 460.5 466.3 457.5 470.0 454.4 473.5 451.3 476.8 448.0 461.3 441.6 458.5 444.3 455.6 446.9 452.5 449.5 449.3 451.9 446.0 454.3 442.5 456.6 438.9 458.8 435.2 460.9 431.4 462.9Z" fill="none" stroke="#576273" stroke-width="1.3" stroke-linejoin="round"/><g clip-path="url(#h36)"><path d="M470.9 430.1 486.4 436.5 488.8 432.9 491.1 429.3 493.1 425.6 495.0 421.8 496.6 418.0 498.0 414.1 499.2 410.2 500.2 406.3 500.9 402.3 501.4 398.4 483.5 398.2 483.1 401.5 482.4 404.8 481.6 408.1 480.6 411.4 479.4 414.6 478.0 417.8 476.5 420.9 474.8 424.1 472.9 427.1Z" fill="#f0f0f0"/><path d="M501.4 398.4 483.5 398.2 483.5 417.3 501.3 417.4Z" fill="#c7c7c7"/><path d="M501.3 417.4 483.5 417.3" fill="none" stroke="#576273" stroke-width="1.3"/><path d="M501.4 398.4L501.3 417.4" stroke="#576273" stroke-width="1.3"/><path d="M483.5 398.2L483.5 417.3" stroke="#576273" stroke-width="1.3"/><path d="M483.5 398.2 483.1 401.5 482.4 404.8 481.6 408.1 480.6 411.4 479.4 414.6 478.0 417.8 476.5 420.9 474.8 424.1 472.9 427.1 470.9 430.1 470.8 449.2 472.9 446.2 474.7 443.1 476.4 440.0 477.9 436.8 479.3 433.6 480.5 430.4 481.5 427.2 482.3 423.9 483.0 420.6 483.5 417.3Z" fill="#d5d5d5"/><path d="M483.5 417.3 483.0 420.6 482.3 423.9 481.5 427.2 480.5 430.4 479.3 433.6 477.9 436.8 476.4 440.0 474.7 443.1 472.9 446.2 470.8 449.2" fill="none" stroke="#576273" stroke-width="1.3"/><path d="M483.5 398.2L483.5 417.3" stroke="#576273" stroke-width="1.3"/><path d="M470.9 430.1L470.8 449.2" stroke="#576273" stroke-width="1.3"/></g><path d="M470.9 430.1 486.4 436.5 488.8 432.9 491.1 429.3 493.1 425.6 495.0 421.8 496.6 418.0 498.0 414.1 499.2 410.2 500.2 406.3 500.9 402.3 501.4 398.4 483.5 398.2 483.1 401.5 482.4 404.8 481.6 408.1 480.6 411.4 479.4 414.6 478.0 417.8 476.5 420.9 474.8 424.1 472.9 427.1Z" fill="none" stroke="#576273" stroke-width="1.3" stroke-linejoin="round"/><path d="M397.8 390.9 397.8 389.0 397.5 387.1 397.1 385.3 396.5 383.5 395.8 381.7 394.9 379.9 393.8 378.2 392.5 376.5 391.2 374.9 389.6 373.4 387.9 371.9 386.1 370.6 384.2 369.3 382.2 368.1 380.0 367.0 377.7 365.9 375.4 365.0 373.0 364.3 370.5 363.6 367.9 363.0 365.3 362.6 362.7 362.2 360.0 362.0 357.4 362.0 354.7 362.0 352.0 362.2 349.4 362.4 346.8 362.8 344.2 363.4 341.7 364.0 339.2 364.8 336.9 365.6 334.6 366.6 332.4 367.7 330.3 368.8 328.3 370.1 326.5 371.4 324.7 372.9 323.2 374.4 321.7 376.0 320.4 377.6 319.3 379.3 318.3 381.1 317.5 382.8 316.9 384.7 316.4 386.5 316.1 388.4 316.0 390.2 316.0 392.1 316.3 394.0 316.7 395.8 317.2 397.7 318.0 399.5 318.9 401.2 320.0 402.9 321.2 404.6 322.6 406.2 324.1 407.8 325.8 409.2 327.6 410.6 329.5 411.9 331.6 413.1 333.8 414.2 336.0 415.2 338.4 416.1 340.8 416.9 343.3 417.6 345.8 418.2 348.5 418.6 351.1 419.0 353.8 419.2 356.4 419.2 359.1 419.2 361.8 419.0 364.4 418.8 367.1 418.3 369.6 417.8 372.1 417.2 374.6 416.4 377.0 415.6 379.3 414.6 381.5 413.5 383.6 412.3 385.5 411.1 387.4 409.7 389.1 408.3 390.7 406.8 392.1 405.2 393.4 403.5 394.5 401.8 395.5 400.1 396.3 398.3 397.0 396.5 397.4 394.6 397.7 392.8Z" fill="#d6d6d6"/><g clip-path="url(#cdisc)"><path d="M397.8 393.0 397.8 391.1 397.5 389.3 397.1 387.4 396.5 385.6 395.8 383.8 394.9 382.0 393.8 380.3 392.5 378.7 391.2 377.1 389.6 375.5 387.9 374.1 386.1 372.7 384.2 371.4 382.2 370.2 380.0 369.1 377.7 368.1 375.4 367.2 373.0 366.4 370.5 365.7 367.9 365.1 365.3 364.7 362.7 364.4 360.0 364.2 357.4 364.1 354.7 364.1 352.0 364.3 349.4 364.6 346.8 365.0 344.2 365.5 341.7 366.1 339.2 366.9 336.9 367.7 334.6 368.7 332.4 369.8 330.3 371.0 328.3 372.2 326.5 373.6 324.7 375.0 323.2 376.5 321.7 378.1 320.4 379.7 319.3 381.4 318.3 383.2 317.5 385.0 316.9 386.8 316.4 388.6 316.1 390.5 316.0 392.4 316.0 394.2 316.3 396.1 316.7 398.0 317.2 399.8 318.0 401.6 318.9 403.3 320.0 405.1 321.2 406.7 322.6 408.3 324.1 409.9 325.8 411.3 327.6 412.7 329.6 414.0 331.6 415.2 333.8 416.3 336.0 417.4 338.4 418.3 340.8 419.0 343.3 419.7 345.8 420.3 348.5 420.7 351.1 421.1 353.8 421.3 356.4 421.4 359.1 421.3 361.8 421.2 364.4 420.9 367.1 420.5 369.6 419.9 372.1 419.3 374.6 418.5 377.0 417.7 379.3 416.7 381.5 415.6 383.6 414.5 385.5 413.2 387.4 411.8 389.1 410.4 390.7 408.9 392.1 407.3 393.4 405.7 394.5 404.0 395.5 402.2 396.3 400.4 396.9 398.6 397.4 396.7 397.7 394.9Z" fill="#efefef" stroke="#576273" stroke-width="1.04"/></g><path d="M397.8 390.9 397.8 389.0 397.5 387.1 397.1 385.3 396.5 383.5 395.8 381.7 394.9 379.9 393.8 378.2 392.5 376.5 391.2 374.9 389.6 373.4 387.9 371.9 386.1 370.6 384.2 369.3 382.2 368.1 380.0 367.0 377.7 365.9 375.4 365.0 373.0 364.3 370.5 363.6 367.9 363.0 365.3 362.6 362.7 362.2 360.0 362.0 357.4 362.0 354.7 362.0 352.0 362.2 349.4 362.4 346.8 362.8 344.2 363.4 341.7 364.0 339.2 364.8 336.9 365.6 334.6 366.6 332.4 367.7 330.3 368.8 328.3 370.1 326.5 371.4 324.7 372.9 323.2 374.4 321.7 376.0 320.4 377.6 319.3 379.3 318.3 381.1 317.5 382.8 316.9 384.7 316.4 386.5 316.1 388.4 316.0 390.2 316.0 392.1 316.3 394.0 316.7 395.8 317.2 397.7 318.0 399.5 318.9 401.2 320.0 402.9 321.2 404.6 322.6 406.2 324.1 407.8 325.8 409.2 327.6 410.6 329.5 411.9 331.6 413.1 333.8 414.2 336.0 415.2 338.4 416.1 340.8 416.9 343.3 417.6 345.8 418.2 348.5 418.6 351.1 419.0 353.8 419.2 356.4 419.2 359.1 419.2 361.8 419.0 364.4 418.8 367.1 418.3 369.6 417.8 372.1 417.2 374.6 416.4 377.0 415.6 379.3 414.6 381.5 413.5 383.6 412.3 385.5 411.1 387.4 409.7 389.1 408.3 390.7 406.8 392.1 405.2 393.4 403.5 394.5 401.8 395.5 400.1 396.3 398.3 397.0 396.5 397.4 394.6 397.7 392.8Z" fill="none" stroke="#576273" stroke-width="1.3"/></svg>
<div id="snap">Sn</div>
<div id="bottom"></div>
<div id="home"></div>
</body></html>
